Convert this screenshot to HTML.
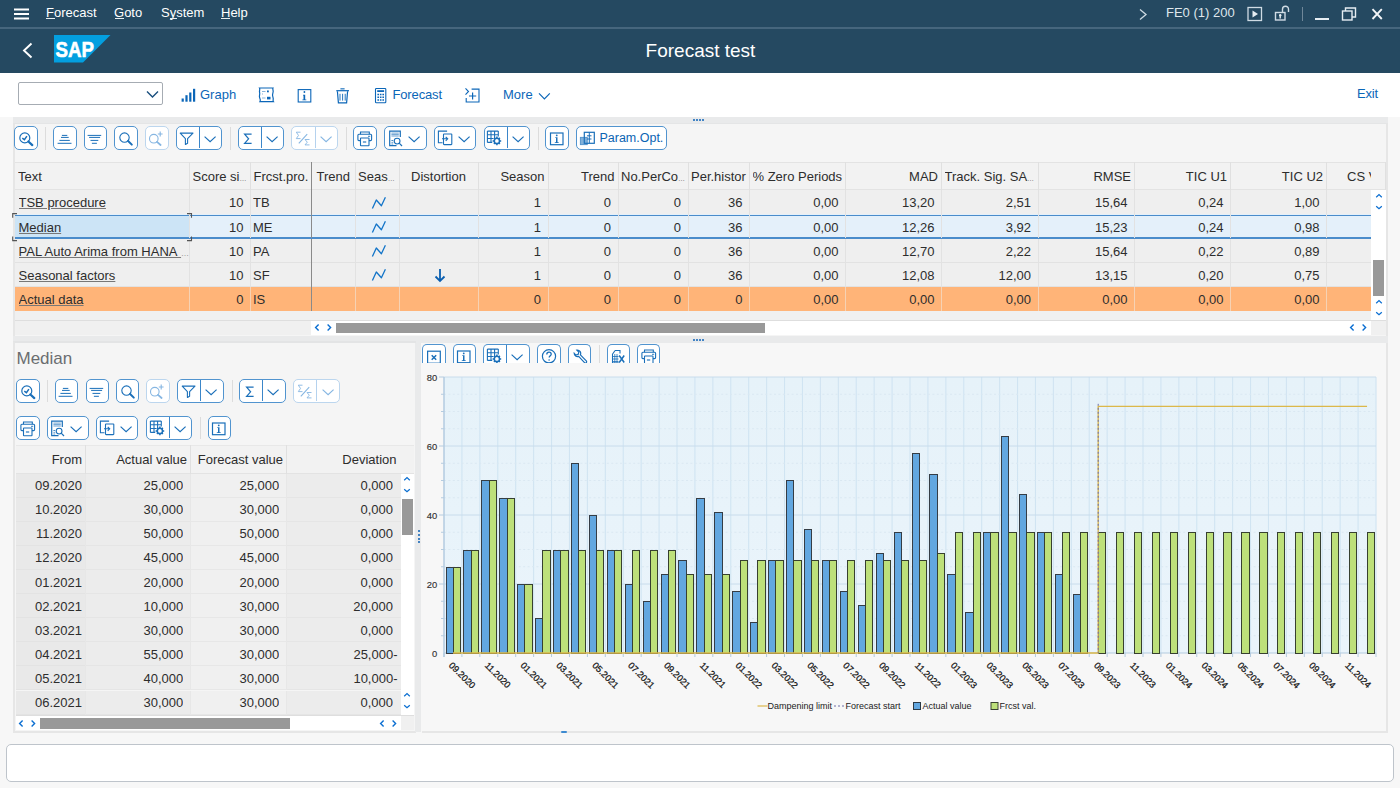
<!DOCTYPE html><html><head><meta charset="utf-8"><style>
*{box-sizing:border-box;margin:0;padding:0}
html,body{width:1400px;height:788px;overflow:hidden;background:#f7f7f7;font-family:"Liberation Sans",sans-serif;color:#333}
.a{position:absolute}
svg.a{overflow:visible}
.mn{top:4px;color:#fff;font-size:13px;line-height:18px}
.mn u{text-decoration:none}
.tbt{color:#0b66b8;font-size:13px;line-height:16px}
.dot{width:2.2px;height:2.2px;border-radius:1.1px;background:#0b62b8}
.btn{border:1.5px solid #5194cf;border-radius:5px;height:24px;background:#fff}
.btn.d{border-color:#bcd6ee}
.sep{width:1px;background:#dcdcdc}
.c{position:absolute;font-size:13px;line-height:24px;white-space:nowrap;overflow:hidden;color:#2d2d2d}
.r{text-align:right}
.hd{color:#333}
.lk{text-decoration:underline;text-decoration-color:#777}
</style></head><body><div class="a" style="left:0;top:0;width:1400px;height:73px;background:#254961"></div>
<div class="a" style="left:0;top:27px;width:1400px;height:2px;background:#46667d"></div>
<svg class="a" style="left:13px;top:7px" width="17" height="14"><rect x="1" y="1.5" width="15" height="2" fill="#fff"/><rect x="1" y="6" width="15" height="2" fill="#fff"/><rect x="1" y="10.5" width="15" height="2" fill="#fff"/></svg>
<div class="a mn" style="left:46px"><u>F</u>orecast</div>
<div class="a mn" style="left:114px"><u>G</u>oto</div>
<div class="a mn" style="left:161px">S<u>y</u>stem</div>
<div class="a mn" style="left:221px"><u>H</u>elp</div>
<div class="a" style="left:46px;top:18.2px;width:8.5px;height:1.1px;background:#e8eef2"></div>
<div class="a" style="left:114.5px;top:18.2px;width:9.5px;height:1.1px;background:#e8eef2"></div>
<div class="a" style="left:170px;top:18.2px;width:6.5px;height:1.1px;background:#e8eef2"></div>
<div class="a" style="left:221.3px;top:18.2px;width:9px;height:1.1px;background:#e8eef2"></div>
<svg class="a" style="left:1136px;top:6px" width="14" height="16"><path d="M4 3.5l6 5-6 5" fill="none" stroke="#cfdbe4" stroke-width="1.3"/></svg>
<div class="a" style="left:1166px;top:4px;color:#dfe7ec;font-size:13px;line-height:18px">FE0 (1) 200</div>
<svg class="a" style="left:1246px;top:6px" width="18" height="16"><rect x="2" y="1.5" width="13.5" height="13" fill="none" stroke="#cfdbe4" stroke-width="1.3"/><path d="M6.5 4.5v7l5.5-3.5z" fill="#e6edf2"/></svg>
<svg class="a" style="left:1273px;top:4px" width="20" height="18"><rect x="2.5" y="8.5" width="9.5" height="7.5" fill="none" stroke="#cfdbe4" stroke-width="1.4"/><path d="M9.5 8.5V5.2a3 3 0 0 1 6 0V8" fill="none" stroke="#cfdbe4" stroke-width="1.4"/><circle cx="7.2" cy="11.2" r="1.2" fill="#e6edf2"/><rect x="6.5" y="11.5" width="1.4" height="3" fill="#e6edf2"/></svg>
<div class="a" style="left:1302px;top:7px;width:1px;height:14px;background:#6f8799"></div>
<div class="a" style="left:1315px;top:18px;width:14px;height:2px;background:#e6edf2"></div>
<svg class="a" style="left:1340px;top:5px" width="18" height="18"><rect x="2.5" y="6" width="9.5" height="9" fill="none" stroke="#e6edf2" stroke-width="1.4"/><path d="M5.5 6V3h10v9h-3.5" fill="none" stroke="#e6edf2" stroke-width="1.4"/></svg>
<svg class="a" style="left:1370px;top:7px" width="14" height="14"><path d="M2.5 2.2l9.3 9.8M11.8 2.2L2.5 12" stroke="#f2f5f8" stroke-width="1.9"/></svg>
<svg class="a" style="left:20px;top:41px" width="14" height="20"><path d="M11.5 2.5L4 9.5l7.5 7" fill="none" stroke="#fff" stroke-width="1.9"/></svg>
<svg class="a" style="left:54px;top:35px" width="57" height="28" viewBox="0 0 57 28"><path d="M0 0H56.5L29 27.5H0z" fill="#039fe0"/><text x="1.5" y="21.6" font-family="Liberation Sans" font-weight="bold" font-size="22.6" fill="#fff" textLength="38.5" lengthAdjust="spacingAndGlyphs" stroke="#fff" stroke-width="0.6">SAP</text></svg>
<div class="a" style="left:0.5px;top:38.8px;width:1400px;text-align:center;color:#fff;font-size:19px;line-height:24px">Forecast test</div>
<div class="a" style="left:0;top:73px;width:1400px;height:44px;background:#fff"></div>
<div class="a" style="left:17.5px;top:82px;width:145px;height:22.5px;border:1px solid #a6acb3;border-radius:2px;background:#fff"></div>
<svg class="a" style="left:143px;top:86px" width="18" height="16"><path d="M4 5.5l5.5 5.5 5.5-5.5" fill="none" stroke="#1a4f7e" stroke-width="1.4"/></svg>
<svg class="a" style="left:181px;top:88px" width="16" height="16"><rect x="0.6" y="10.5" width="2.2" height="3.2" fill="#0b66b8"/><rect x="4.4" y="7.2" width="2.2" height="6.5" fill="#0b66b8"/><rect x="8.2" y="4.5" width="2.2" height="9.2" fill="#0b66b8"/><rect x="12" y="0.8" width="2.2" height="12.9" fill="#0b66b8"/></svg>
<div class="a tbt" style="left:200px;top:86.8px">Graph</div>
<svg class="a" style="left:258px;top:87px" width="18" height="18"><path d="M1.5 1h13.5c-0.8 1.5 0.8 2.5 0 4.5s-0.8 3 0 5-0.5 3 0.4 4.2H2c0.8-1.2 0.3-2.6-0.4-4.2s0.6-3 0-5 0.8-3-0.1-4.5z" fill="none" stroke="#0b66b8" stroke-width="1.2"/><rect x="9" y="3.5" width="1.8" height="1.8" fill="#0b66b8"/><rect x="9" y="9.8" width="3.5" height="2.6" fill="#0b66b8"/><path d="M4 4.5h3.5M4 7h1M4 11h3.5" stroke="#0b66b8" stroke-width="0.7" opacity="0.7"/></svg>
<svg class="a" style="left:297px;top:88px" width="16" height="16"><rect x="1.2" y="1.6" width="12.6" height="12.4" fill="none" stroke="#0b66b8" stroke-width="1.1"/><circle cx="7.4" cy="4" r="0.9" fill="#0b66b8"/><path d="M6 6.8h2.2v4.6h1.1v0.8H5.4v-0.8h1.1v-3.8h-0.5z" fill="#0b66b8"/></svg>
<svg class="a" style="left:335px;top:87px" width="16" height="17"><path d="M1.3 3.7h12.7" stroke="#0b66b8" stroke-width="1.2"/><path d="M5.4 2.4h4.2v-1.1h-4.2z" fill="#0b66b8"/><path d="M2.4 4.3l1 11.5h8.2l1-11.5" fill="none" stroke="#0b66b8" stroke-width="1.2"/><path d="M5 6.8v6.8M7.6 6.8v6.8M10.2 6.8v6.8" stroke="#0b66b8" stroke-width="0.9"/></svg>
<svg class="a" style="left:374px;top:87px" width="14" height="17"><rect x="1.5" y="1.5" width="10.3" height="14.3" rx="0.8" fill="none" stroke="#0b66b8" stroke-width="1.1"/><rect x="3.2" y="3.2" width="6.9" height="1.8" fill="#0b66b8"/><path d="M3.4 7.5h1.6M5.9 7.5h1.6M8.4 7.5h1.6M3.4 10.3h1.6M5.9 10.3h1.6M8.4 10.3h1.6M3.4 13h1.6M5.9 13h1.6M8.4 13h1.6" stroke="#0b66b8" stroke-width="1.5"/></svg>
<div class="a tbt" style="left:392.5px;top:86.8px;letter-spacing:-0.15px">Forecast</div>
<svg class="a" style="left:464px;top:87px" width="18" height="18"><path d="M1.5 1.4l3 3.1-3 3.1" fill="none" stroke="#0b66b8" stroke-width="1.1"/><path d="M7.6 2.1h7.4v12.9H2.2v-4" fill="none" stroke="#0b66b8" stroke-width="1.1"/><path d="M8.6 5.4v7.2M5 9h7.2" stroke="#0b66b8" stroke-width="1.2"/></svg>
<div class="a tbt" style="left:503px;top:86.8px">More</div>
<svg class="a" style="left:537px;top:90px" width="14" height="12"><path d="M2 3.4l5.4 5.4 5.4-5.4" fill="none" stroke="#0b66b8" stroke-width="1.2"/></svg>
<div class="a tbt" style="left:1357px;top:86.3px;letter-spacing:-0.2px">Exit</div>
<div class="a" style="left:12.5px;top:116.8px;width:1375px;height:6.5px;background:#e9eaeb"></div>
<div class="a dot" style="left:693px;top:119px"></div>
<div class="a dot" style="left:696px;top:119px"></div>
<div class="a dot" style="left:699px;top:119px"></div>
<div class="a dot" style="left:702px;top:119px"></div>
<div class="a" style="left:12.5px;top:123px;width:1375px;height:213.5px;background:#f5f5f5;border-top:1px solid #e4e5e6;border-left:2px solid #e6e6e6;border-right:2px solid #e6e6e6;border-bottom:1.7px solid #e3e3e3"></div>
<div class="a btn" style="left:14.1px;top:126px;width:23.8px;height:24px"><svg class="a" style="left:-1.5px;top:-1.5px" width="24" height="24" viewBox="0 0 24 24"><circle cx="10.8" cy="11.9" r="5" fill="none" stroke="#1a6fb9" stroke-width="1.2"/><line x1="14.4" y1="15.5" x2="18.3" y2="19.1" stroke="#1a6fb9" stroke-width="2.2" stroke-linecap="round"/><path d="M8.3 12.2 L10.4 13.6 L12.9 10.1" fill="none" stroke="#1a6fb9" stroke-width="1.5"/></svg></div>
<div class="a sep" style="left:45px;top:126.5px;height:23px"></div>
<div class="a btn" style="left:53.1px;top:126px;width:23.5px;height:24px"><svg class="a" style="left:-1.5px;top:-1.5px" width="24" height="24" viewBox="0 0 24 24"><path d="M8.9 9.4h5.4M8 11.4h7.7M6.4 14.4h10.4M4.6 17.3h13.9" stroke="#1a6fb9" stroke-width="1"/></svg></div>
<div class="a btn" style="left:83.8px;top:126px;width:23.6px;height:24px"><svg class="a" style="left:-1.5px;top:-1.5px" width="24" height="24" viewBox="0 0 24 24"><path d="M4.6 9.4h13.6M6.1 11.4h11M7.5 14.4h7.8M8.9 17.3h5" stroke="#1a6fb9" stroke-width="1"/></svg></div>
<div class="a btn" style="left:114.1px;top:126px;width:23.8px;height:24px"><svg class="a" style="left:-1.5px;top:-1.5px" width="24" height="24" viewBox="0 0 24 24"><circle cx="10.5" cy="11.6" r="4.7" fill="none" stroke="#1a6fb9" stroke-width="1.1"/><line x1="14.1" y1="15" x2="17.8" y2="18.6" stroke="#1a6fb9" stroke-width="2" stroke-linecap="round"/></svg></div>
<div class="a btn d" style="left:145.2px;top:126px;width:23.4px;height:24px"><svg class="a" style="left:-1.5px;top:-1.5px" width="24" height="24" viewBox="0 0 24 24"><circle cx="8.8" cy="12.7" r="4.3" fill="none" stroke="#86b6e2" stroke-width="1.1"/><line x1="12" y1="15.9" x2="15.6" y2="19" stroke="#86b6e2" stroke-width="1.8" stroke-linecap="round"/><path d="M15.2 5.6v4.8M12.8 8h4.8" stroke="#86b6e2" stroke-width="1.1"/></svg></div>
<div class="a btn" style="left:175.6px;top:126px;width:46.7px;height:24px"><svg class="a" style="left:-1.5px;top:-1.5px" width="24" height="24" viewBox="0 0 24 24"><path d="M5.2 7.1h12.8l-5.4 5.6v4.5l-2.2 1.3v-5.8z" fill="none" stroke="#1a6fb9" stroke-width="1.1" stroke-linejoin="round"/></svg><svg class="a" style="left:21.0px;top:-1.5px" width="24" height="24" viewBox="0 0 24 24"><path d="M6.6 10.6l5.5 5 5.5-5" fill="none" stroke="#1a6fb9" stroke-width="1.2"/></svg><div class="a" style="left:22.3px;top:0;width:1.2px;height:21px;background:#3b86c9"></div></div>
<div class="a sep" style="left:230px;top:126.5px;height:23px"></div>
<div class="a btn" style="left:237.7px;top:126px;width:46.4px;height:24px"><svg class="a" style="left:-1.5px;top:-1.5px" width="24" height="24" viewBox="0 0 24 24"><path d="M14.6 8.2H7.6l4 4.6-4 4.6h7" fill="none" stroke="#1a6fb9" stroke-width="1.2"/></svg><svg class="a" style="left:21.0px;top:-1.5px" width="24" height="24" viewBox="0 0 24 24"><path d="M6.6 10.6l5.5 5 5.5-5" fill="none" stroke="#1a6fb9" stroke-width="1.2"/></svg><div class="a" style="left:22.3px;top:0;width:1.2px;height:21px;background:#3b86c9"></div></div>
<div class="a btn d" style="left:291.4px;top:126px;width:46.7px;height:24px"><svg class="a" style="left:-1.5px;top:-1.5px" width="24" height="24" viewBox="0 0 24 24"><path d="M9.5 6.2H5.3l2.2 3.2-2.2 3.2h4.2" fill="none" stroke="#86b6e2" stroke-width="0.9"/><path d="M16.2 8.2L7.8 17.4" stroke="#86b6e2" stroke-width="1.1"/><path d="M18.5 13.5h-4.5l2.3 2.7-2.3 2.7h4.5" fill="none" stroke="#86b6e2" stroke-width="0.9"/></svg><svg class="a" style="left:21.5px;top:-1.5px" width="24" height="24" viewBox="0 0 24 24"><path d="M6.6 10.6l5.5 5 5.5-5" fill="none" stroke="#86b6e2" stroke-width="1.2"/></svg><div class="a" style="left:22.5px;top:0;width:1.2px;height:21px;background:#b5d2ee"></div></div>
<div class="a sep" style="left:345.5px;top:126.5px;height:23px"></div>
<div class="a btn" style="left:353.4px;top:126px;width:23.5px;height:24px"><svg class="a" style="left:-1.5px;top:-1.5px" width="24" height="24" viewBox="0 0 24 24"><path d="M7.5 8.3V6h8.8v2.3" fill="none" stroke="#1a6fb9" stroke-width="1.1"/><rect x="4.9" y="8.3" width="13.7" height="6.3" rx="1" fill="none" stroke="#1a6fb9" stroke-width="1.1"/><rect x="7.5" y="12" width="8.5" height="7.7" rx="0.5" fill="#fff" stroke="#1a6fb9" stroke-width="1.1"/><path d="M9.9 16h3.3" stroke="#1a6fb9" stroke-width="1.6" opacity="0.7"/><path d="M15 10.3h2.2" stroke="#1a6fb9" stroke-width="0.9"/></svg></div>
<div class="a btn" style="left:384.3px;top:126px;width:42.3px;height:24px"><svg class="a" style="left:-1.5px;top:-1.5px" width="24" height="24" viewBox="0 0 24 24"><path d="M12.5 19.7H5.7V5.1h10.6v6" fill="none" stroke="#1a6fb9" stroke-width="1.2"/><path d="M7.4 7.1h7.4M7.4 8.6h7.4M7.4 10h7.4" stroke="#1a6fb9" stroke-width="0.8" opacity="0.8"/><path d="M7.4 14.6h1.8M7.4 16.9h1.8M7.4 19.1h1.8" stroke="#1a6fb9" stroke-width="0.9"/><circle cx="13.1" cy="15.1" r="2.9" fill="#fff" stroke="#1a6fb9" stroke-width="1.1"/><line x1="15.2" y1="17.2" x2="18" y2="20" stroke="#1a6fb9" stroke-width="1.2"/></svg><svg class="a" style="left:16.7px;top:-1.5px" width="24" height="24" viewBox="0 0 24 24"><path d="M6.6 10.6l5.5 5 5.5-5" fill="none" stroke="#1a6fb9" stroke-width="1.2"/></svg></div>
<div class="a btn" style="left:434px;top:126px;width:41.9px;height:24px"><svg class="a" style="left:-1.5px;top:-1.5px" width="24" height="24" viewBox="0 0 24 24"><path d="M8.5 16.7H4.4V5.1h8.7" fill="none" stroke="#1a6fb9" stroke-width="1.1"/><rect x="9.5" y="8" width="8.3" height="10.6" rx="0.6" fill="#fff" stroke="#1a6fb9" stroke-width="1.1"/><path d="M8 12.8h5.5M11.7 10.8l2 2-2 2" fill="none" stroke="#1a6fb9" stroke-width="1.1"/></svg><svg class="a" style="left:16.7px;top:-1.5px" width="24" height="24" viewBox="0 0 24 24"><path d="M6.6 10.6l5.5 5 5.5-5" fill="none" stroke="#1a6fb9" stroke-width="1.2"/></svg></div>
<div class="a btn" style="left:483.5px;top:126px;width:46.3px;height:24px"><svg class="a" style="left:-1.5px;top:-1.5px" width="24" height="24" viewBox="0 0 24 24"><path d="M4.4 5.1h10.9M4.4 8.8h10.9M4.4 12.5h6M4.4 16.4h4.8M4.4 5.1v11.3M8 5.1v11.3M11.6 5.1v7.4M15.3 5.1v5.5" fill="none" stroke="#1a6fb9" stroke-width="1.1"/><circle cx="13.9" cy="14.9" r="2.6" fill="#fff" stroke="#1a6fb9" stroke-width="1.5"/><path d="M13.9 10.6v1.6M13.9 17.6v1.6M9.6 14.9h1.6M16.6 14.9h1.6M10.9 11.9l1.1 1.1M15.8 16.8l1.1 1.1M10.9 17.9l1.1-1.1M15.8 13l1.1-1.1" stroke="#1a6fb9" stroke-width="1.5"/></svg><svg class="a" style="left:21.1px;top:-1.5px" width="24" height="24" viewBox="0 0 24 24"><path d="M6.6 10.6l5.5 5 5.5-5" fill="none" stroke="#1a6fb9" stroke-width="1.2"/></svg><div class="a" style="left:22.2px;top:0;width:1.2px;height:21px;background:#3b86c9"></div></div>
<div class="a sep" style="left:537.5px;top:126.5px;height:23px"></div>
<div class="a btn" style="left:545.25px;top:126px;width:23.5px;height:24px"><svg class="a" style="left:-1.5px;top:-1.5px" width="24" height="24" viewBox="0 0 24 24"><rect x="5.5" y="7" width="12.5" height="11.7" fill="none" stroke="#1a6fb9" stroke-width="1.2"/><circle cx="11.75" cy="9.4" r="0.9" fill="#1a6fb9"/><path d="M10.3 11.2h2.2v5h1.2v0.9h-3.9v-0.9h1.2v-4.1h-0.7z" fill="#1a6fb9"/></svg></div>
<div class="a btn" style="left:576.25px;top:126px;width:90.75px;height:24px"><svg class="a" style="left:-1.5px;top:-1.5px" width="24" height="24" viewBox="0 0 24 24"><rect x="4.3" y="11.3" width="7" height="7.4" fill="#1a6fb9" opacity="0.55"/><rect x="8.3" y="6.3" width="10" height="11" fill="none" stroke="#1a6fb9" stroke-width="1.2"/><path d="M13.3 6.3v11M11 9.8h4.5M11 13h4.5" stroke="#1a6fb9" stroke-width="1"/><rect x="4.3" y="11.3" width="7" height="7.4" fill="none" stroke="#1a6fb9" stroke-width="0.8" opacity="0.7"/></svg><div class="a" style="left:22.2px;top:2.5px;font-size:12.5px;line-height:16px;color:#0b64b3">Param.Opt.</div></div>
<div class="a" style="left:15px;top:162px;width:1371px;height:28.30000000000001px;background:#f2f2f2;border-top:1px solid #e3e3e3;border-bottom:1px solid #e3e3e3"></div>
<div class="c" style="top:165px;left:18px;width:171.0px;line-height:24px;text-overflow:clip">Text</div>
<div class="c" style="top:165px;left:192.5px;width:57.5px;line-height:24px;text-overflow:clip">Score si<span style="font-size:7px;color:#555">…</span></div>
<div class="a" style="left:189.0px;top:162px;width:1px;height:28.30000000000001px;background:#e0e0e0"></div>
<div class="c" style="top:165px;left:253.5px;width:57.5px;line-height:24px;text-overflow:clip">Frcst.pro.</div>
<div class="a" style="left:250.0px;top:162px;width:1px;height:28.30000000000001px;background:#e0e0e0"></div>
<div class="c" style="top:165px;left:311.5px;width:43.5px;text-align:center;line-height:24px;text-overflow:clip">Trend</div>
<div class="a" style="left:311.0px;top:162px;width:1px;height:28.30000000000001px;background:#8a8a8a"></div>
<div class="c" style="top:165px;left:358px;width:40.5px;line-height:24px;text-overflow:clip">Seas<span style="font-size:7px;color:#555">…</span></div>
<div class="a" style="left:354.5px;top:162px;width:1px;height:28.30000000000001px;background:#e0e0e0"></div>
<div class="c" style="top:165px;left:399px;width:79px;text-align:center;line-height:24px;text-overflow:clip">Distortion</div>
<div class="a" style="left:398.5px;top:162px;width:1px;height:28.30000000000001px;background:#e0e0e0"></div>
<div class="c" style="top:165px;left:478px;width:66.5px;text-align:right;line-height:24px;text-overflow:clip">Season</div>
<div class="a" style="left:477.5px;top:162px;width:1px;height:28.30000000000001px;background:#e0e0e0"></div>
<div class="c" style="top:165px;left:548px;width:66.5px;text-align:right;line-height:24px;text-overflow:clip">Trend</div>
<div class="a" style="left:547.5px;top:162px;width:1px;height:28.30000000000001px;background:#e0e0e0"></div>
<div class="c" style="top:165px;left:621px;width:66.5px;line-height:24px;text-overflow:clip">No.PerCo<span style="font-size:7px;color:#555">…</span></div>
<div class="a" style="left:617.5px;top:162px;width:1px;height:28.30000000000001px;background:#e0e0e0"></div>
<div class="c" style="top:165px;left:691px;width:58.0px;line-height:24px;text-overflow:clip">Per.histor</div>
<div class="a" style="left:687.5px;top:162px;width:1px;height:28.30000000000001px;background:#e0e0e0"></div>
<div class="c" style="top:165px;left:752.5px;width:92.5px;line-height:24px;text-overflow:clip">% Zero Periods</div>
<div class="a" style="left:749.0px;top:162px;width:1px;height:28.30000000000001px;background:#e0e0e0"></div>
<div class="c" style="top:165px;left:845.5px;width:92.5px;text-align:right;line-height:24px;text-overflow:clip">MAD</div>
<div class="a" style="left:845.0px;top:162px;width:1px;height:28.30000000000001px;background:#e0e0e0"></div>
<div class="c" style="top:165px;left:944.5px;width:93.0px;line-height:24px;text-overflow:clip">Track. Sig. SA<span style="font-size:7px;color:#555">…</span></div>
<div class="a" style="left:941.0px;top:162px;width:1px;height:28.30000000000001px;background:#e0e0e0"></div>
<div class="c" style="top:165px;left:1038px;width:93.0px;text-align:right;line-height:24px;text-overflow:clip">RMSE</div>
<div class="a" style="left:1037.5px;top:162px;width:1px;height:28.30000000000001px;background:#e0e0e0"></div>
<div class="c" style="top:165px;left:1134.5px;width:92.5px;text-align:right;line-height:24px;text-overflow:clip">TIC U1</div>
<div class="a" style="left:1134.0px;top:162px;width:1px;height:28.30000000000001px;background:#e0e0e0"></div>
<div class="c" style="top:165px;left:1230.5px;width:92.5px;text-align:right;line-height:24px;text-overflow:clip">TIC U2</div>
<div class="a" style="left:1230.0px;top:162px;width:1px;height:28.30000000000001px;background:#e0e0e0"></div>
<div class="c" style="top:165px;left:1347.0px;width:24.0px;line-height:24px;text-overflow:clip">CS V</div>
<div class="a" style="left:1326.0px;top:162px;width:1px;height:28.30000000000001px;background:#e0e0e0"></div>
<div class="a" style="left:1385px;top:162px;width:1px;height:28.30000000000001px;background:#e0e0e0"></div>
<div class="a" style="left:15px;top:190.3px;width:1356px;height:24.400000000000002px;background:#efefef;border-bottom:1px solid #e2e2e2"></div>
<div class="a" style="left:189.0px;top:190.3px;width:1px;height:24.1px;background:#e2e2e2"></div>
<div class="a" style="left:250.0px;top:190.3px;width:1px;height:24.1px;background:#e2e2e2"></div>
<div class="a" style="left:311.0px;top:190.3px;width:1px;height:24.1px;background:#8a8a8a"></div>
<div class="a" style="left:354.5px;top:190.3px;width:1px;height:24.1px;background:#e2e2e2"></div>
<div class="a" style="left:398.5px;top:190.3px;width:1px;height:24.1px;background:#e2e2e2"></div>
<div class="a" style="left:477.5px;top:190.3px;width:1px;height:24.1px;background:#e2e2e2"></div>
<div class="a" style="left:547.5px;top:190.3px;width:1px;height:24.1px;background:#e2e2e2"></div>
<div class="a" style="left:617.5px;top:190.3px;width:1px;height:24.1px;background:#e2e2e2"></div>
<div class="a" style="left:687.5px;top:190.3px;width:1px;height:24.1px;background:#e2e2e2"></div>
<div class="a" style="left:749.0px;top:190.3px;width:1px;height:24.1px;background:#e2e2e2"></div>
<div class="a" style="left:845.0px;top:190.3px;width:1px;height:24.1px;background:#e2e2e2"></div>
<div class="a" style="left:941.0px;top:190.3px;width:1px;height:24.1px;background:#e2e2e2"></div>
<div class="a" style="left:1037.5px;top:190.3px;width:1px;height:24.1px;background:#e2e2e2"></div>
<div class="a" style="left:1134.0px;top:190.3px;width:1px;height:24.1px;background:#e2e2e2"></div>
<div class="a" style="left:1230.0px;top:190.3px;width:1px;height:24.1px;background:#e2e2e2"></div>
<div class="a" style="left:1326.0px;top:190.3px;width:1px;height:24.1px;background:#e2e2e2"></div>
<div class="c" style="top:191.4px;left:18.5px;width:172px"><span class="lk">TSB procedure</span></div>
<div class="c r" style="top:191.4px;left:189.5px;width:54.0px">10</div>
<div class="c" style="top:191.4px;left:253.0px;width:58.0px">TB</div>
<svg class="a" style="left:370px;top:194.8px" width="16" height="16"><path d="M2.4 13.5L6.3 5l5.1 5.8 4-8.5" fill="none" stroke="#1274c8" stroke-width="1.3" stroke-linejoin="round"/></svg>
<div class="c r" style="top:191.4px;left:478px;width:63px">1</div>
<div class="c r" style="top:191.4px;left:548px;width:63px">0</div>
<div class="c r" style="top:191.4px;left:618px;width:63px">0</div>
<div class="c r" style="top:191.4px;left:688px;width:54.5px">36</div>
<div class="c r" style="top:191.4px;left:749.5px;width:89.0px">0,00</div>
<div class="c r" style="top:191.4px;left:845.5px;width:89.0px">13,20</div>
<div class="c r" style="top:191.4px;left:941.5px;width:89.5px">2,51</div>
<div class="c r" style="top:191.4px;left:1038px;width:89.5px">15,64</div>
<div class="c r" style="top:191.4px;left:1134.5px;width:89.0px">0,24</div>
<div class="c r" style="top:191.4px;left:1230.5px;width:89.0px">1,00</div>
<div class="a" style="left:15px;top:214.4px;width:1356px;height:24.400000000000002px;background:#e4f0fa;border-bottom:1px solid #e2e2e2"></div>
<div class="a" style="left:15px;top:214.6px;width:174.5px;height:24.1px;background:#cce4f6"></div>
<div class="a" style="left:15px;top:214.8px;width:1356px;height:1.2px;background:#4a8ccb"></div>
<div class="a" style="left:15px;top:237.4px;width:1356px;height:1.2px;background:#4a8ccb"></div>
<div class="a" style="left:189.0px;top:214.4px;width:1px;height:24.1px;background:#e2e2e2"></div>
<div class="a" style="left:250.0px;top:214.4px;width:1px;height:24.1px;background:#e2e2e2"></div>
<div class="a" style="left:311.0px;top:214.4px;width:1px;height:24.1px;background:#8a8a8a"></div>
<div class="a" style="left:354.5px;top:214.4px;width:1px;height:24.1px;background:#e2e2e2"></div>
<div class="a" style="left:398.5px;top:214.4px;width:1px;height:24.1px;background:#e2e2e2"></div>
<div class="a" style="left:477.5px;top:214.4px;width:1px;height:24.1px;background:#e2e2e2"></div>
<div class="a" style="left:547.5px;top:214.4px;width:1px;height:24.1px;background:#e2e2e2"></div>
<div class="a" style="left:617.5px;top:214.4px;width:1px;height:24.1px;background:#e2e2e2"></div>
<div class="a" style="left:687.5px;top:214.4px;width:1px;height:24.1px;background:#e2e2e2"></div>
<div class="a" style="left:749.0px;top:214.4px;width:1px;height:24.1px;background:#e2e2e2"></div>
<div class="a" style="left:845.0px;top:214.4px;width:1px;height:24.1px;background:#e2e2e2"></div>
<div class="a" style="left:941.0px;top:214.4px;width:1px;height:24.1px;background:#e2e2e2"></div>
<div class="a" style="left:1037.5px;top:214.4px;width:1px;height:24.1px;background:#e2e2e2"></div>
<div class="a" style="left:1134.0px;top:214.4px;width:1px;height:24.1px;background:#e2e2e2"></div>
<div class="a" style="left:1230.0px;top:214.4px;width:1px;height:24.1px;background:#e2e2e2"></div>
<div class="a" style="left:1326.0px;top:214.4px;width:1px;height:24.1px;background:#e2e2e2"></div>
<div class="c" style="top:215.5px;left:18.5px;width:172px"><span class="lk">Median</span></div>
<div class="c r" style="top:215.5px;left:189.5px;width:54.0px">10</div>
<div class="c" style="top:215.5px;left:253.0px;width:58.0px">ME</div>
<svg class="a" style="left:370px;top:218.9px" width="16" height="16"><path d="M2.4 13.5L6.3 5l5.1 5.8 4-8.5" fill="none" stroke="#1274c8" stroke-width="1.3" stroke-linejoin="round"/></svg>
<div class="c r" style="top:215.5px;left:478px;width:63px">1</div>
<div class="c r" style="top:215.5px;left:548px;width:63px">0</div>
<div class="c r" style="top:215.5px;left:618px;width:63px">0</div>
<div class="c r" style="top:215.5px;left:688px;width:54.5px">36</div>
<div class="c r" style="top:215.5px;left:749.5px;width:89.0px">0,00</div>
<div class="c r" style="top:215.5px;left:845.5px;width:89.0px">12,26</div>
<div class="c r" style="top:215.5px;left:941.5px;width:89.5px">3,92</div>
<div class="c r" style="top:215.5px;left:1038px;width:89.5px">15,23</div>
<div class="c r" style="top:215.5px;left:1134.5px;width:89.0px">0,24</div>
<div class="c r" style="top:215.5px;left:1230.5px;width:89.0px">0,98</div>
<div class="a" style="left:15px;top:238.5px;width:1356px;height:24.400000000000002px;background:#efefef;border-bottom:1px solid #e2e2e2"></div>
<div class="a" style="left:189.0px;top:238.5px;width:1px;height:24.1px;background:#e2e2e2"></div>
<div class="a" style="left:250.0px;top:238.5px;width:1px;height:24.1px;background:#e2e2e2"></div>
<div class="a" style="left:311.0px;top:238.5px;width:1px;height:24.1px;background:#8a8a8a"></div>
<div class="a" style="left:354.5px;top:238.5px;width:1px;height:24.1px;background:#e2e2e2"></div>
<div class="a" style="left:398.5px;top:238.5px;width:1px;height:24.1px;background:#e2e2e2"></div>
<div class="a" style="left:477.5px;top:238.5px;width:1px;height:24.1px;background:#e2e2e2"></div>
<div class="a" style="left:547.5px;top:238.5px;width:1px;height:24.1px;background:#e2e2e2"></div>
<div class="a" style="left:617.5px;top:238.5px;width:1px;height:24.1px;background:#e2e2e2"></div>
<div class="a" style="left:687.5px;top:238.5px;width:1px;height:24.1px;background:#e2e2e2"></div>
<div class="a" style="left:749.0px;top:238.5px;width:1px;height:24.1px;background:#e2e2e2"></div>
<div class="a" style="left:845.0px;top:238.5px;width:1px;height:24.1px;background:#e2e2e2"></div>
<div class="a" style="left:941.0px;top:238.5px;width:1px;height:24.1px;background:#e2e2e2"></div>
<div class="a" style="left:1037.5px;top:238.5px;width:1px;height:24.1px;background:#e2e2e2"></div>
<div class="a" style="left:1134.0px;top:238.5px;width:1px;height:24.1px;background:#e2e2e2"></div>
<div class="a" style="left:1230.0px;top:238.5px;width:1px;height:24.1px;background:#e2e2e2"></div>
<div class="a" style="left:1326.0px;top:238.5px;width:1px;height:24.1px;background:#e2e2e2"></div>
<div class="c" style="top:239.6px;left:18.5px;width:175px"><span class="lk">PAL Auto Arima from HANA&nbsp;</span><span style="font-size:8px;color:#777">…</span></div>
<div class="c r" style="top:239.6px;left:189.5px;width:54.0px">10</div>
<div class="c" style="top:239.6px;left:253.0px;width:58.0px">PA</div>
<svg class="a" style="left:370px;top:243.0px" width="16" height="16"><path d="M2.4 13.5L6.3 5l5.1 5.8 4-8.5" fill="none" stroke="#1274c8" stroke-width="1.3" stroke-linejoin="round"/></svg>
<div class="c r" style="top:239.6px;left:478px;width:63px">1</div>
<div class="c r" style="top:239.6px;left:548px;width:63px">0</div>
<div class="c r" style="top:239.6px;left:618px;width:63px">0</div>
<div class="c r" style="top:239.6px;left:688px;width:54.5px">36</div>
<div class="c r" style="top:239.6px;left:749.5px;width:89.0px">0,00</div>
<div class="c r" style="top:239.6px;left:845.5px;width:89.0px">12,70</div>
<div class="c r" style="top:239.6px;left:941.5px;width:89.5px">2,22</div>
<div class="c r" style="top:239.6px;left:1038px;width:89.5px">15,64</div>
<div class="c r" style="top:239.6px;left:1134.5px;width:89.0px">0,22</div>
<div class="c r" style="top:239.6px;left:1230.5px;width:89.0px">0,89</div>
<div class="a" style="left:15px;top:262.6px;width:1356px;height:24.400000000000002px;background:#efefef;border-bottom:1px solid #e2e2e2"></div>
<div class="a" style="left:189.0px;top:262.6px;width:1px;height:24.1px;background:#e2e2e2"></div>
<div class="a" style="left:250.0px;top:262.6px;width:1px;height:24.1px;background:#e2e2e2"></div>
<div class="a" style="left:311.0px;top:262.6px;width:1px;height:24.1px;background:#8a8a8a"></div>
<div class="a" style="left:354.5px;top:262.6px;width:1px;height:24.1px;background:#e2e2e2"></div>
<div class="a" style="left:398.5px;top:262.6px;width:1px;height:24.1px;background:#e2e2e2"></div>
<div class="a" style="left:477.5px;top:262.6px;width:1px;height:24.1px;background:#e2e2e2"></div>
<div class="a" style="left:547.5px;top:262.6px;width:1px;height:24.1px;background:#e2e2e2"></div>
<div class="a" style="left:617.5px;top:262.6px;width:1px;height:24.1px;background:#e2e2e2"></div>
<div class="a" style="left:687.5px;top:262.6px;width:1px;height:24.1px;background:#e2e2e2"></div>
<div class="a" style="left:749.0px;top:262.6px;width:1px;height:24.1px;background:#e2e2e2"></div>
<div class="a" style="left:845.0px;top:262.6px;width:1px;height:24.1px;background:#e2e2e2"></div>
<div class="a" style="left:941.0px;top:262.6px;width:1px;height:24.1px;background:#e2e2e2"></div>
<div class="a" style="left:1037.5px;top:262.6px;width:1px;height:24.1px;background:#e2e2e2"></div>
<div class="a" style="left:1134.0px;top:262.6px;width:1px;height:24.1px;background:#e2e2e2"></div>
<div class="a" style="left:1230.0px;top:262.6px;width:1px;height:24.1px;background:#e2e2e2"></div>
<div class="a" style="left:1326.0px;top:262.6px;width:1px;height:24.1px;background:#e2e2e2"></div>
<div class="c" style="top:263.70000000000005px;left:18.5px;width:172px"><span class="lk">Seasonal factors</span></div>
<div class="c r" style="top:263.70000000000005px;left:189.5px;width:54.0px">10</div>
<div class="c" style="top:263.70000000000005px;left:253.0px;width:58.0px">SF</div>
<svg class="a" style="left:370px;top:267.1px" width="16" height="16"><path d="M2.4 13.5L6.3 5l5.1 5.8 4-8.5" fill="none" stroke="#1274c8" stroke-width="1.3" stroke-linejoin="round"/></svg>
<svg class="a" style="left:432.5px;top:266.6px" width="14" height="16"><path d="M7 2v12M2.5 9.5L7 14l4.5-4.5" fill="none" stroke="#0b5fb0" stroke-width="1.8"/></svg>
<div class="c r" style="top:263.70000000000005px;left:478px;width:63px">1</div>
<div class="c r" style="top:263.70000000000005px;left:548px;width:63px">0</div>
<div class="c r" style="top:263.70000000000005px;left:618px;width:63px">0</div>
<div class="c r" style="top:263.70000000000005px;left:688px;width:54.5px">36</div>
<div class="c r" style="top:263.70000000000005px;left:749.5px;width:89.0px">0,00</div>
<div class="c r" style="top:263.70000000000005px;left:845.5px;width:89.0px">12,08</div>
<div class="c r" style="top:263.70000000000005px;left:941.5px;width:89.5px">12,00</div>
<div class="c r" style="top:263.70000000000005px;left:1038px;width:89.5px">13,15</div>
<div class="c r" style="top:263.70000000000005px;left:1134.5px;width:89.0px">0,20</div>
<div class="c r" style="top:263.70000000000005px;left:1230.5px;width:89.0px">0,75</div>
<div class="a" style="left:15px;top:286.70000000000005px;width:1356px;height:24.400000000000002px;background:#ffb478;border-bottom:1px solid #ffb478"></div>
<div class="a" style="left:189.0px;top:286.70000000000005px;width:1px;height:24.1px;background:#f6d2b4"></div>
<div class="a" style="left:250.0px;top:286.70000000000005px;width:1px;height:24.1px;background:#f6d2b4"></div>
<div class="a" style="left:311.0px;top:286.70000000000005px;width:1px;height:24.1px;background:#8a8a8a"></div>
<div class="a" style="left:354.5px;top:286.70000000000005px;width:1px;height:24.1px;background:#f6d2b4"></div>
<div class="a" style="left:398.5px;top:286.70000000000005px;width:1px;height:24.1px;background:#f6d2b4"></div>
<div class="a" style="left:477.5px;top:286.70000000000005px;width:1px;height:24.1px;background:#f6d2b4"></div>
<div class="a" style="left:547.5px;top:286.70000000000005px;width:1px;height:24.1px;background:#f6d2b4"></div>
<div class="a" style="left:617.5px;top:286.70000000000005px;width:1px;height:24.1px;background:#f6d2b4"></div>
<div class="a" style="left:687.5px;top:286.70000000000005px;width:1px;height:24.1px;background:#f6d2b4"></div>
<div class="a" style="left:749.0px;top:286.70000000000005px;width:1px;height:24.1px;background:#f6d2b4"></div>
<div class="a" style="left:845.0px;top:286.70000000000005px;width:1px;height:24.1px;background:#f6d2b4"></div>
<div class="a" style="left:941.0px;top:286.70000000000005px;width:1px;height:24.1px;background:#f6d2b4"></div>
<div class="a" style="left:1037.5px;top:286.70000000000005px;width:1px;height:24.1px;background:#f6d2b4"></div>
<div class="a" style="left:1134.0px;top:286.70000000000005px;width:1px;height:24.1px;background:#f6d2b4"></div>
<div class="a" style="left:1230.0px;top:286.70000000000005px;width:1px;height:24.1px;background:#f6d2b4"></div>
<div class="a" style="left:1326.0px;top:286.70000000000005px;width:1px;height:24.1px;background:#f6d2b4"></div>
<div class="c" style="top:287.80000000000007px;left:18.5px;width:172px"><span class="lk">Actual data</span></div>
<div class="c r" style="top:287.80000000000007px;left:189.5px;width:54.0px">0</div>
<div class="c" style="top:287.80000000000007px;left:253.0px;width:58.0px">IS</div>
<div class="c r" style="top:287.80000000000007px;left:478px;width:63px">0</div>
<div class="c r" style="top:287.80000000000007px;left:548px;width:63px">0</div>
<div class="c r" style="top:287.80000000000007px;left:618px;width:63px">0</div>
<div class="c r" style="top:287.80000000000007px;left:688px;width:54.5px">0</div>
<div class="c r" style="top:287.80000000000007px;left:749.5px;width:89.0px">0,00</div>
<div class="c r" style="top:287.80000000000007px;left:845.5px;width:89.0px">0,00</div>
<div class="c r" style="top:287.80000000000007px;left:941.5px;width:89.5px">0,00</div>
<div class="c r" style="top:287.80000000000007px;left:1038px;width:89.5px">0,00</div>
<div class="c r" style="top:287.80000000000007px;left:1134.5px;width:89.0px">0,00</div>
<div class="c r" style="top:287.80000000000007px;left:1230.5px;width:89.0px">0,00</div>
<svg class="a" style="left:12px;top:212.8px" width="182" height="31"><path d="M0.7 4.8V0.6H5M175 0.6h4.5V4.8M0.7 23.4v4.2H5M175 27.6h4.5V23.4" fill="none" stroke="#555" stroke-width="1.1"/></svg>
<div class="a" style="left:15px;top:310.8px;width:1356px;height:9.199999999999989px;background:#f0f0f0"></div>
<div class="a" style="left:15px;top:320px;width:1371px;height:1px;background:#dedede"></div>
<div class="a" style="left:15px;top:321px;width:296px;height:14px;background:#f0f0f0"></div>
<div class="a" style="left:311px;top:321px;width:1060px;height:14px;background:#fff"></div>
<div class="a" style="left:336px;top:322.5px;width:429px;height:10px;background:#999"></div>
<div class="a" style="left:1371px;top:321px;width:15px;height:14px;background:#f0f0f0"></div>
<svg class="a" style="left:311px;top:322px" width="22" height="12"><path d="M7.6 2.6L4.6 5.6 7.6 8.6M16.6 2.6l3 3-3 3" fill="none" stroke="#0a6ed1" stroke-width="1.4"/></svg>
<svg class="a" style="left:1346px;top:322px" width="22" height="12"><path d="M7.6 2.6L4.6 5.6 7.6 8.6M16.6 2.6l3 3-3 3" fill="none" stroke="#0a6ed1" stroke-width="1.4"/></svg>
<div class="a" style="left:1371px;top:190.3px;width:14.5px;height:129.7px;background:#fff"></div>
<div class="a" style="left:1373px;top:260px;width:11px;height:36px;background:#999"></div>
<svg class="a" style="left:1372.5px;top:191px" width="12" height="22"><path d="M3.2 6.2l2.8-2.6 2.8 2.6M3.2 15.2l2.8 2.6 2.8-2.6" fill="none" stroke="#0a6ed1" stroke-width="1.2"/></svg>
<svg class="a" style="left:1372.5px;top:297px" width="12" height="22"><path d="M3.2 6.2l2.8-2.6 2.8 2.6M3.2 15.2l2.8 2.6 2.8-2.6" fill="none" stroke="#0a6ed1" stroke-width="1.2"/></svg>
<div class="a" style="left:12.5px;top:336.4px;width:1375px;height:6.6px;background:#e9eaeb"></div>
<div class="a dot" style="left:693px;top:339px"></div>
<div class="a dot" style="left:696px;top:339px"></div>
<div class="a dot" style="left:699px;top:339px"></div>
<div class="a dot" style="left:702px;top:339px"></div>
<div class="a" style="left:12.5px;top:341.2px;width:403px;height:391.5px;background:#f5f5f5;border-top:2.6px solid #e3e4e5;border-left:2px solid #e6e6e6;border-bottom:2px solid #e6e6e6"></div>
<div class="a" style="left:16.5px;top:347px;font-size:17px;line-height:24px;color:#6a6d70">Median</div>
<div class="a btn" style="left:16px;top:379px;width:23.5px;height:23.5px"><svg class="a" style="left:-1.5px;top:-1.5px" width="24" height="24" viewBox="0 0 24 24"><circle cx="10.8" cy="11.9" r="5" fill="none" stroke="#1a6fb9" stroke-width="1.2"/><line x1="14.4" y1="15.5" x2="18.3" y2="19.1" stroke="#1a6fb9" stroke-width="2.2" stroke-linecap="round"/><path d="M8.3 12.2 L10.4 13.6 L12.9 10.1" fill="none" stroke="#1a6fb9" stroke-width="1.5"/></svg></div>
<div class="a sep" style="left:47px;top:379.5px;height:22.5px"></div>
<div class="a btn" style="left:54.6px;top:379px;width:23.4px;height:23.5px"><svg class="a" style="left:-1.5px;top:-1.5px" width="24" height="24" viewBox="0 0 24 24"><path d="M8.9 9.4h5.4M8 11.4h7.7M6.4 14.4h10.4M4.6 17.3h13.9" stroke="#1a6fb9" stroke-width="1"/></svg></div>
<div class="a btn" style="left:85.5px;top:379px;width:23.4px;height:23.5px"><svg class="a" style="left:-1.5px;top:-1.5px" width="24" height="24" viewBox="0 0 24 24"><path d="M4.6 9.4h13.6M6.1 11.4h11M7.5 14.4h7.8M8.9 17.3h5" stroke="#1a6fb9" stroke-width="1"/></svg></div>
<div class="a btn" style="left:116px;top:379px;width:23.4px;height:23.5px"><svg class="a" style="left:-1.5px;top:-1.5px" width="24" height="24" viewBox="0 0 24 24"><circle cx="10.5" cy="11.6" r="4.7" fill="none" stroke="#1a6fb9" stroke-width="1.1"/><line x1="14.1" y1="15" x2="17.8" y2="18.6" stroke="#1a6fb9" stroke-width="2" stroke-linecap="round"/></svg></div>
<div class="a btn d" style="left:146.4px;top:379px;width:23.4px;height:23.5px"><svg class="a" style="left:-1.5px;top:-1.5px" width="24" height="24" viewBox="0 0 24 24"><circle cx="8.8" cy="12.7" r="4.3" fill="none" stroke="#86b6e2" stroke-width="1.1"/><line x1="12" y1="15.9" x2="15.6" y2="19" stroke="#86b6e2" stroke-width="1.8" stroke-linecap="round"/><path d="M15.2 5.6v4.8M12.8 8h4.8" stroke="#86b6e2" stroke-width="1.1"/></svg></div>
<div class="a btn" style="left:177px;top:379px;width:46.5px;height:23.5px"><svg class="a" style="left:-1.5px;top:-1.5px" width="24" height="24" viewBox="0 0 24 24"><path d="M5.2 7.1h12.8l-5.4 5.6v4.5l-2.2 1.3v-5.8z" fill="none" stroke="#1a6fb9" stroke-width="1.1" stroke-linejoin="round"/></svg><svg class="a" style="left:21.0px;top:-1.5px" width="24" height="24" viewBox="0 0 24 24"><path d="M6.6 10.6l5.5 5 5.5-5" fill="none" stroke="#1a6fb9" stroke-width="1.2"/></svg><div class="a" style="left:22.0px;top:0;width:1.2px;height:20.5px;background:#3b86c9"></div></div>
<div class="a sep" style="left:231.6px;top:379.5px;height:22.5px"></div>
<div class="a btn" style="left:239px;top:379px;width:46.6px;height:23.5px"><svg class="a" style="left:-1.5px;top:-1.5px" width="24" height="24" viewBox="0 0 24 24"><path d="M14.6 8.2H7.6l4 4.6-4 4.6h7" fill="none" stroke="#1a6fb9" stroke-width="1.2"/></svg><svg class="a" style="left:21.0px;top:-1.5px" width="24" height="24" viewBox="0 0 24 24"><path d="M6.6 10.6l5.5 5 5.5-5" fill="none" stroke="#1a6fb9" stroke-width="1.2"/></svg><div class="a" style="left:22.0px;top:0;width:1.2px;height:20.5px;background:#3b86c9"></div></div>
<div class="a btn d" style="left:293px;top:379px;width:46.6px;height:23.5px"><svg class="a" style="left:-1.5px;top:-1.5px" width="24" height="24" viewBox="0 0 24 24"><path d="M9.5 6.2H5.3l2.2 3.2-2.2 3.2h4.2" fill="none" stroke="#86b6e2" stroke-width="0.9"/><path d="M16.2 8.2L7.8 17.4" stroke="#86b6e2" stroke-width="1.1"/><path d="M18.5 13.5h-4.5l2.3 2.7-2.3 2.7h4.5" fill="none" stroke="#86b6e2" stroke-width="0.9"/></svg><svg class="a" style="left:21.5px;top:-1.5px" width="24" height="24" viewBox="0 0 24 24"><path d="M6.6 10.6l5.5 5 5.5-5" fill="none" stroke="#86b6e2" stroke-width="1.2"/></svg><div class="a" style="left:22.0px;top:0;width:1.2px;height:20.5px;background:#b5d2ee"></div></div>
<div class="a btn" style="left:16px;top:416px;width:23.5px;height:23.5px"><svg class="a" style="left:-1.5px;top:-1.5px" width="24" height="24" viewBox="0 0 24 24"><path d="M7.5 8.3V6h8.8v2.3" fill="none" stroke="#1a6fb9" stroke-width="1.1"/><rect x="4.9" y="8.3" width="13.7" height="6.3" rx="1" fill="none" stroke="#1a6fb9" stroke-width="1.1"/><rect x="7.5" y="12" width="8.5" height="7.7" rx="0.5" fill="#fff" stroke="#1a6fb9" stroke-width="1.1"/><path d="M9.9 16h3.3" stroke="#1a6fb9" stroke-width="1.6" opacity="0.7"/><path d="M15 10.3h2.2" stroke="#1a6fb9" stroke-width="0.9"/></svg></div>
<div class="a btn" style="left:46.5px;top:416px;width:42px;height:23.5px"><svg class="a" style="left:-1.5px;top:-1.5px" width="24" height="24" viewBox="0 0 24 24"><path d="M12.5 19.7H5.7V5.1h10.6v6" fill="none" stroke="#1a6fb9" stroke-width="1.2"/><path d="M7.4 7.1h7.4M7.4 8.6h7.4M7.4 10h7.4" stroke="#1a6fb9" stroke-width="0.8" opacity="0.8"/><path d="M7.4 14.6h1.8M7.4 16.9h1.8M7.4 19.1h1.8" stroke="#1a6fb9" stroke-width="0.9"/><circle cx="13.1" cy="15.1" r="2.9" fill="#fff" stroke="#1a6fb9" stroke-width="1.1"/><line x1="15.2" y1="17.2" x2="18" y2="20" stroke="#1a6fb9" stroke-width="1.2"/></svg><svg class="a" style="left:16.7px;top:-1.5px" width="24" height="24" viewBox="0 0 24 24"><path d="M6.6 10.6l5.5 5 5.5-5" fill="none" stroke="#1a6fb9" stroke-width="1.2"/></svg></div>
<div class="a btn" style="left:96px;top:416px;width:42px;height:23.5px"><svg class="a" style="left:-1.5px;top:-1.5px" width="24" height="24" viewBox="0 0 24 24"><path d="M8.5 16.7H4.4V5.1h8.7" fill="none" stroke="#1a6fb9" stroke-width="1.1"/><rect x="9.5" y="8" width="8.3" height="10.6" rx="0.6" fill="#fff" stroke="#1a6fb9" stroke-width="1.1"/><path d="M8 12.8h5.5M11.7 10.8l2 2-2 2" fill="none" stroke="#1a6fb9" stroke-width="1.1"/></svg><svg class="a" style="left:16.7px;top:-1.5px" width="24" height="24" viewBox="0 0 24 24"><path d="M6.6 10.6l5.5 5 5.5-5" fill="none" stroke="#1a6fb9" stroke-width="1.2"/></svg></div>
<div class="a btn" style="left:146px;top:416px;width:46px;height:23.5px"><svg class="a" style="left:-1.5px;top:-1.5px" width="24" height="24" viewBox="0 0 24 24"><path d="M4.4 5.1h10.9M4.4 8.8h10.9M4.4 12.5h6M4.4 16.4h4.8M4.4 5.1v11.3M8 5.1v11.3M11.6 5.1v7.4M15.3 5.1v5.5" fill="none" stroke="#1a6fb9" stroke-width="1.1"/><circle cx="13.9" cy="14.9" r="2.6" fill="#fff" stroke="#1a6fb9" stroke-width="1.5"/><path d="M13.9 10.6v1.6M13.9 17.6v1.6M9.6 14.9h1.6M16.6 14.9h1.6M10.9 11.9l1.1 1.1M15.8 16.8l1.1 1.1M10.9 17.9l1.1-1.1M15.8 13l1.1-1.1" stroke="#1a6fb9" stroke-width="1.5"/></svg><svg class="a" style="left:21.1px;top:-1.5px" width="24" height="24" viewBox="0 0 24 24"><path d="M6.6 10.6l5.5 5 5.5-5" fill="none" stroke="#1a6fb9" stroke-width="1.2"/></svg><div class="a" style="left:22.0px;top:0;width:1.2px;height:20.5px;background:#3b86c9"></div></div>
<div class="a sep" style="left:200px;top:416.5px;height:22.5px"></div>
<div class="a btn" style="left:207.6px;top:416px;width:23.4px;height:23.5px"><svg class="a" style="left:-1.5px;top:-1.5px" width="24" height="24" viewBox="0 0 24 24"><rect x="5.5" y="7" width="12.5" height="11.7" fill="none" stroke="#1a6fb9" stroke-width="1.2"/><circle cx="11.75" cy="9.4" r="0.9" fill="#1a6fb9"/><path d="M10.3 11.2h2.2v5h1.2v0.9h-3.9v-0.9h1.2v-4.1h-0.7z" fill="#1a6fb9"/></svg></div>
<div class="a" style="left:16px;top:445.2px;width:398px;height:28.400000000000034px;background:#f2f2f2;border-top:1px solid #e8e8e8;border-bottom:1px solid #e3e3e3"></div>
<div class="c r" style="top:447.5px;left:16px;width:66.0px">From</div>
<div class="c r" style="top:447.5px;left:85.5px;width:101.5px">Actual value</div>
<div class="a" style="left:85.0px;top:445.2px;width:1px;height:28.400000000000034px;background:#e0e0e0"></div>
<div class="c r" style="top:447.5px;left:190.5px;width:92.5px">Forecast value</div>
<div class="a" style="left:190.0px;top:445.2px;width:1px;height:28.400000000000034px;background:#e0e0e0"></div>
<div class="c r" style="top:447.5px;left:286.5px;width:110.0px">Deviation</div>
<div class="a" style="left:286.0px;top:445.2px;width:1px;height:28.400000000000034px;background:#e0e0e0"></div>
<div class="a" style="left:16px;top:473.6px;width:385px;height:24.1px;background:#ececec;border-bottom:1px solid #e5e5e5"></div>
<div class="a" style="left:16px;top:473.6px;width:69.5px;height:24.1px;background:#e9e9e9;border-bottom:1px solid #e3e3e3"></div>
<div class="a" style="left:190.5px;top:473.6px;width:96px;height:24.1px;background:#f0f0f0;border-bottom:1px solid #e7e7e7"></div>
<div class="a" style="left:85.0px;top:473.6px;width:1px;height:24.1px;background:#e7e7e7"></div>
<div class="a" style="left:190.0px;top:473.6px;width:1px;height:24.1px;background:#e7e7e7"></div>
<div class="a" style="left:286.0px;top:473.6px;width:1px;height:24.1px;background:#e7e7e7"></div>
<div class="c r" style="top:474.1px;left:16px;width:66.0px">09.2020</div>
<div class="c r" style="top:474.1px;left:85.5px;width:97.7px">25,000</div>
<div class="c r" style="top:474.1px;left:190.5px;width:88.7px">25,000</div>
<div class="c r" style="top:474.1px;left:286.5px;width:106.5px">0,000</div>
<div class="a" style="left:16px;top:497.70000000000005px;width:385px;height:24.1px;background:#ececec;border-bottom:1px solid #e5e5e5"></div>
<div class="a" style="left:16px;top:497.70000000000005px;width:69.5px;height:24.1px;background:#e9e9e9;border-bottom:1px solid #e3e3e3"></div>
<div class="a" style="left:190.5px;top:497.70000000000005px;width:96px;height:24.1px;background:#f0f0f0;border-bottom:1px solid #e7e7e7"></div>
<div class="a" style="left:85.0px;top:497.70000000000005px;width:1px;height:24.1px;background:#e7e7e7"></div>
<div class="a" style="left:190.0px;top:497.70000000000005px;width:1px;height:24.1px;background:#e7e7e7"></div>
<div class="a" style="left:286.0px;top:497.70000000000005px;width:1px;height:24.1px;background:#e7e7e7"></div>
<div class="c r" style="top:498.20000000000005px;left:16px;width:66.0px">10.2020</div>
<div class="c r" style="top:498.20000000000005px;left:85.5px;width:97.7px">30,000</div>
<div class="c r" style="top:498.20000000000005px;left:190.5px;width:88.7px">30,000</div>
<div class="c r" style="top:498.20000000000005px;left:286.5px;width:106.5px">0,000</div>
<div class="a" style="left:16px;top:521.8000000000001px;width:385px;height:24.1px;background:#ececec;border-bottom:1px solid #e5e5e5"></div>
<div class="a" style="left:16px;top:521.8000000000001px;width:69.5px;height:24.1px;background:#e9e9e9;border-bottom:1px solid #e3e3e3"></div>
<div class="a" style="left:190.5px;top:521.8000000000001px;width:96px;height:24.1px;background:#f0f0f0;border-bottom:1px solid #e7e7e7"></div>
<div class="a" style="left:85.0px;top:521.8000000000001px;width:1px;height:24.1px;background:#e7e7e7"></div>
<div class="a" style="left:190.0px;top:521.8000000000001px;width:1px;height:24.1px;background:#e7e7e7"></div>
<div class="a" style="left:286.0px;top:521.8000000000001px;width:1px;height:24.1px;background:#e7e7e7"></div>
<div class="c r" style="top:522.3000000000001px;left:16px;width:66.0px">11.2020</div>
<div class="c r" style="top:522.3000000000001px;left:85.5px;width:97.7px">50,000</div>
<div class="c r" style="top:522.3000000000001px;left:190.5px;width:88.7px">50,000</div>
<div class="c r" style="top:522.3000000000001px;left:286.5px;width:106.5px">0,000</div>
<div class="a" style="left:16px;top:545.9000000000001px;width:385px;height:24.1px;background:#ececec;border-bottom:1px solid #e5e5e5"></div>
<div class="a" style="left:16px;top:545.9000000000001px;width:69.5px;height:24.1px;background:#e9e9e9;border-bottom:1px solid #e3e3e3"></div>
<div class="a" style="left:190.5px;top:545.9000000000001px;width:96px;height:24.1px;background:#f0f0f0;border-bottom:1px solid #e7e7e7"></div>
<div class="a" style="left:85.0px;top:545.9000000000001px;width:1px;height:24.1px;background:#e7e7e7"></div>
<div class="a" style="left:190.0px;top:545.9000000000001px;width:1px;height:24.1px;background:#e7e7e7"></div>
<div class="a" style="left:286.0px;top:545.9000000000001px;width:1px;height:24.1px;background:#e7e7e7"></div>
<div class="c r" style="top:546.4000000000001px;left:16px;width:66.0px">12.2020</div>
<div class="c r" style="top:546.4000000000001px;left:85.5px;width:97.7px">45,000</div>
<div class="c r" style="top:546.4000000000001px;left:190.5px;width:88.7px">45,000</div>
<div class="c r" style="top:546.4000000000001px;left:286.5px;width:106.5px">0,000</div>
<div class="a" style="left:16px;top:570.0px;width:385px;height:24.1px;background:#ececec;border-bottom:1px solid #e5e5e5"></div>
<div class="a" style="left:16px;top:570.0px;width:69.5px;height:24.1px;background:#e9e9e9;border-bottom:1px solid #e3e3e3"></div>
<div class="a" style="left:190.5px;top:570.0px;width:96px;height:24.1px;background:#f0f0f0;border-bottom:1px solid #e7e7e7"></div>
<div class="a" style="left:85.0px;top:570.0px;width:1px;height:24.1px;background:#e7e7e7"></div>
<div class="a" style="left:190.0px;top:570.0px;width:1px;height:24.1px;background:#e7e7e7"></div>
<div class="a" style="left:286.0px;top:570.0px;width:1px;height:24.1px;background:#e7e7e7"></div>
<div class="c r" style="top:570.5px;left:16px;width:66.0px">01.2021</div>
<div class="c r" style="top:570.5px;left:85.5px;width:97.7px">20,000</div>
<div class="c r" style="top:570.5px;left:190.5px;width:88.7px">20,000</div>
<div class="c r" style="top:570.5px;left:286.5px;width:106.5px">0,000</div>
<div class="a" style="left:16px;top:594.1px;width:385px;height:24.1px;background:#ececec;border-bottom:1px solid #e5e5e5"></div>
<div class="a" style="left:16px;top:594.1px;width:69.5px;height:24.1px;background:#e9e9e9;border-bottom:1px solid #e3e3e3"></div>
<div class="a" style="left:190.5px;top:594.1px;width:96px;height:24.1px;background:#f0f0f0;border-bottom:1px solid #e7e7e7"></div>
<div class="a" style="left:85.0px;top:594.1px;width:1px;height:24.1px;background:#e7e7e7"></div>
<div class="a" style="left:190.0px;top:594.1px;width:1px;height:24.1px;background:#e7e7e7"></div>
<div class="a" style="left:286.0px;top:594.1px;width:1px;height:24.1px;background:#e7e7e7"></div>
<div class="c r" style="top:594.6px;left:16px;width:66.0px">02.2021</div>
<div class="c r" style="top:594.6px;left:85.5px;width:97.7px">10,000</div>
<div class="c r" style="top:594.6px;left:190.5px;width:88.7px">30,000</div>
<div class="c r" style="top:594.6px;left:286.5px;width:106.5px">20,000</div>
<div class="a" style="left:16px;top:618.2px;width:385px;height:24.1px;background:#ececec;border-bottom:1px solid #e5e5e5"></div>
<div class="a" style="left:16px;top:618.2px;width:69.5px;height:24.1px;background:#e9e9e9;border-bottom:1px solid #e3e3e3"></div>
<div class="a" style="left:190.5px;top:618.2px;width:96px;height:24.1px;background:#f0f0f0;border-bottom:1px solid #e7e7e7"></div>
<div class="a" style="left:85.0px;top:618.2px;width:1px;height:24.1px;background:#e7e7e7"></div>
<div class="a" style="left:190.0px;top:618.2px;width:1px;height:24.1px;background:#e7e7e7"></div>
<div class="a" style="left:286.0px;top:618.2px;width:1px;height:24.1px;background:#e7e7e7"></div>
<div class="c r" style="top:618.7px;left:16px;width:66.0px">03.2021</div>
<div class="c r" style="top:618.7px;left:85.5px;width:97.7px">30,000</div>
<div class="c r" style="top:618.7px;left:190.5px;width:88.7px">30,000</div>
<div class="c r" style="top:618.7px;left:286.5px;width:106.5px">0,000</div>
<div class="a" style="left:16px;top:642.3000000000001px;width:385px;height:24.1px;background:#ececec;border-bottom:1px solid #e5e5e5"></div>
<div class="a" style="left:16px;top:642.3000000000001px;width:69.5px;height:24.1px;background:#e9e9e9;border-bottom:1px solid #e3e3e3"></div>
<div class="a" style="left:190.5px;top:642.3000000000001px;width:96px;height:24.1px;background:#f0f0f0;border-bottom:1px solid #e7e7e7"></div>
<div class="a" style="left:85.0px;top:642.3000000000001px;width:1px;height:24.1px;background:#e7e7e7"></div>
<div class="a" style="left:190.0px;top:642.3000000000001px;width:1px;height:24.1px;background:#e7e7e7"></div>
<div class="a" style="left:286.0px;top:642.3000000000001px;width:1px;height:24.1px;background:#e7e7e7"></div>
<div class="c r" style="top:642.8000000000001px;left:16px;width:66.0px">04.2021</div>
<div class="c r" style="top:642.8000000000001px;left:85.5px;width:97.7px">55,000</div>
<div class="c r" style="top:642.8000000000001px;left:190.5px;width:88.7px">30,000</div>
<div class="c r" style="top:642.8000000000001px;left:286.5px;width:111.0px">25,000-</div>
<div class="a" style="left:16px;top:666.4000000000001px;width:385px;height:24.1px;background:#ececec;border-bottom:1px solid #e5e5e5"></div>
<div class="a" style="left:16px;top:666.4000000000001px;width:69.5px;height:24.1px;background:#e9e9e9;border-bottom:1px solid #e3e3e3"></div>
<div class="a" style="left:190.5px;top:666.4000000000001px;width:96px;height:24.1px;background:#f0f0f0;border-bottom:1px solid #e7e7e7"></div>
<div class="a" style="left:85.0px;top:666.4000000000001px;width:1px;height:24.1px;background:#e7e7e7"></div>
<div class="a" style="left:190.0px;top:666.4000000000001px;width:1px;height:24.1px;background:#e7e7e7"></div>
<div class="a" style="left:286.0px;top:666.4000000000001px;width:1px;height:24.1px;background:#e7e7e7"></div>
<div class="c r" style="top:666.9000000000001px;left:16px;width:66.0px">05.2021</div>
<div class="c r" style="top:666.9000000000001px;left:85.5px;width:97.7px">40,000</div>
<div class="c r" style="top:666.9000000000001px;left:190.5px;width:88.7px">30,000</div>
<div class="c r" style="top:666.9000000000001px;left:286.5px;width:111.0px">10,000-</div>
<div class="a" style="left:16px;top:690.5px;width:385px;height:24.1px;background:#ececec;border-bottom:1px solid #e5e5e5"></div>
<div class="a" style="left:16px;top:690.5px;width:69.5px;height:24.1px;background:#e9e9e9;border-bottom:1px solid #e3e3e3"></div>
<div class="a" style="left:190.5px;top:690.5px;width:96px;height:24.1px;background:#f0f0f0;border-bottom:1px solid #e7e7e7"></div>
<div class="a" style="left:85.0px;top:690.5px;width:1px;height:24.1px;background:#e7e7e7"></div>
<div class="a" style="left:190.0px;top:690.5px;width:1px;height:24.1px;background:#e7e7e7"></div>
<div class="a" style="left:286.0px;top:690.5px;width:1px;height:24.1px;background:#e7e7e7"></div>
<div class="c r" style="top:691.0px;left:16px;width:66.0px">06.2021</div>
<div class="c r" style="top:691.0px;left:85.5px;width:97.7px">30,000</div>
<div class="c r" style="top:691.0px;left:190.5px;width:88.7px">30,000</div>
<div class="c r" style="top:691.0px;left:286.5px;width:106.5px">0,000</div>
<div class="a" style="left:401px;top:473.6px;width:13px;height:241.39999999999998px;background:#fff"></div>
<div class="a" style="left:402px;top:498.5px;width:10.5px;height:36px;background:#999"></div>
<svg class="a" style="left:401px;top:474px" width="12" height="22"><path d="M3.2 6.2l2.8-2.6 2.8 2.6M3.2 15.2l2.8 2.6 2.8-2.6" fill="none" stroke="#0a6ed1" stroke-width="1.2"/></svg>
<svg class="a" style="left:401px;top:690px" width="12" height="22"><path d="M3.2 6.2l2.8-2.6 2.8 2.6M3.2 15.2l2.8 2.6 2.8-2.6" fill="none" stroke="#0a6ed1" stroke-width="1.2"/></svg>
<div class="a" style="left:16px;top:715px;width:398px;height:1px;background:#dedede"></div>
<div class="a" style="left:16px;top:716px;width:385px;height:14px;background:#fff"></div>
<div class="a" style="left:40px;top:718px;width:250px;height:11px;background:#999"></div>
<div class="a" style="left:401px;top:716px;width:13px;height:14px;background:#f0f0f0"></div>
<svg class="a" style="left:15px;top:717.5px" width="22" height="12"><path d="M7.6 2.6L4.6 5.6 7.6 8.6M16.6 2.6l3 3-3 3" fill="none" stroke="#0a6ed1" stroke-width="1.4"/></svg>
<svg class="a" style="left:376px;top:717.5px" width="22" height="12"><path d="M7.6 2.6L4.6 5.6 7.6 8.6M16.6 2.6l3 3-3 3" fill="none" stroke="#0a6ed1" stroke-width="1.4"/></svg>
<div class="a" style="left:415.2px;top:343px;width:6.3px;height:389px;background:#e9eaeb"></div>
<div class="a dot" style="left:417.8px;top:530.3px;background:#0b5fb5"></div>
<div class="a dot" style="left:417.8px;top:534.1px;background:#0b5fb5"></div>
<div class="a dot" style="left:417.8px;top:537.9px;background:#0b5fb5"></div>
<div class="a dot" style="left:417.8px;top:541.3px;background:#0b5fb5"></div>
<div class="a" style="left:421.5px;top:343px;width:966px;height:390px;background:#f7f7f7;border-right:2px solid #e6e6e6;border-bottom:2px solid #e6e6e6"></div>
<div class="a btn" style="left:422.2px;top:344.2px;width:23.4px;height:24px;border-bottom:none;border-bottom-left-radius:0;border-bottom-right-radius:0;height:19.2px;overflow:hidden"><svg class="a" style="left:-1.5px;top:-1.5px" width="24" height="24" viewBox="0 0 24 24"><rect x="5.6" y="7.2" width="12.7" height="12" fill="none" stroke="#1a6fb9" stroke-width="1.2"/><path d="M9.7 11.3l4.5 4.5M14.2 11.3l-4.5 4.5" stroke="#1a6fb9" stroke-width="1.5"/></svg></div>
<div class="a btn" style="left:452.6px;top:344.2px;width:23.4px;height:24px;border-bottom:none;border-bottom-left-radius:0;border-bottom-right-radius:0;height:19.2px;overflow:hidden"><svg class="a" style="left:-1.5px;top:-1.5px" width="24" height="24" viewBox="0 0 24 24"><rect x="5.5" y="7" width="12.5" height="11.7" fill="none" stroke="#1a6fb9" stroke-width="1.2"/><circle cx="11.75" cy="9.4" r="0.9" fill="#1a6fb9"/><path d="M10.3 11.2h2.2v5h1.2v0.9h-3.9v-0.9h1.2v-4.1h-0.7z" fill="#1a6fb9"/></svg></div>
<div class="a btn" style="left:483px;top:344.2px;width:47px;height:24px;border-bottom:none;border-bottom-left-radius:0;border-bottom-right-radius:0;height:19.2px;overflow:hidden"><svg class="a" style="left:-1.5px;top:-1.5px" width="24" height="24" viewBox="0 0 24 24"><path d="M4.4 5.1h10.9M4.4 8.8h10.9M4.4 12.5h6M4.4 16.4h4.8M4.4 5.1v11.3M8 5.1v11.3M11.6 5.1v7.4M15.3 5.1v5.5" fill="none" stroke="#1a6fb9" stroke-width="1.1"/><circle cx="13.9" cy="14.9" r="2.6" fill="#fff" stroke="#1a6fb9" stroke-width="1.5"/><path d="M13.9 10.6v1.6M13.9 17.6v1.6M9.6 14.9h1.6M16.6 14.9h1.6M10.9 11.9l1.1 1.1M15.8 16.8l1.1 1.1M10.9 17.9l1.1-1.1M15.8 13l1.1-1.1" stroke="#1a6fb9" stroke-width="1.5"/></svg><svg class="a" style="left:21.1px;top:-1.5px" width="24" height="24" viewBox="0 0 24 24"><path d="M6.6 10.6l5.5 5 5.5-5" fill="none" stroke="#1a6fb9" stroke-width="1.2"/></svg><div class="a" style="left:22.2px;top:0;width:1.2px;height:20.7px;background:#3b86c9"></div></div>
<div class="a btn" style="left:537px;top:344.2px;width:23.5px;height:24px;border-bottom:none;border-bottom-left-radius:0;border-bottom-right-radius:0;height:19.2px;overflow:hidden"><svg class="a" style="left:-1.5px;top:-1.5px" width="24" height="24" viewBox="0 0 24 24"><circle cx="12" cy="12.3" r="6.6" fill="none" stroke="#1a6fb9" stroke-width="1.2"/><path d="M9.8 10.4c0-1.4 1-2.2 2.2-2.2s2.2 0.8 2.2 2c0 1.6-2 1.6-2 3.4" fill="none" stroke="#1a6fb9" stroke-width="1.3"/><circle cx="12.1" cy="16" r="0.8" fill="#1a6fb9"/></svg></div>
<div class="a btn" style="left:568px;top:344.2px;width:23.4px;height:24px;border-bottom:none;border-bottom-left-radius:0;border-bottom-right-radius:0;height:19.2px;overflow:hidden"><svg class="a" style="left:-1.5px;top:-1.5px" width="24" height="24" viewBox="0 0 24 24"><path d="M6.2 9.2a3.3 3.3 0 0 0 4.5 3.2l5.8 6.2a1.2 1.2 0 0 0 1.8-1.7l-5.9-6.1a3.3 3.3 0 0 0-3.5-4.6l1.9 1.9-0.7 2.3-2.3 0.7z" fill="none" stroke="#1a6fb9" stroke-width="1.2"/></svg></div>
<div class="a sep" style="left:599px;top:345px;height:18px"></div>
<div class="a btn" style="left:606.6px;top:344.2px;width:23.4px;height:24px;border-bottom:none;border-bottom-left-radius:0;border-bottom-right-radius:0;height:19.2px;overflow:hidden"><svg class="a" style="left:-1.5px;top:-1.5px" width="24" height="24" viewBox="0 0 24 24"><path d="M9 6.5h5v3M6.5 9.5v9.5h7" fill="none" stroke="#1a6fb9" stroke-width="1.1"/><path d="M6.5 12.5h6M6.5 15h6M6.5 17.5h6M8.8 10v9M11 10v9" stroke="#1a6fb9" stroke-width="0.8"/><path d="M13.2 11.5l5 7M18.2 11.5l-5 7" stroke="#1a6fb9" stroke-width="1.5"/><path d="M6.8 9.8l2.3-3.3" stroke="#1a6fb9" stroke-width="1.1"/></svg></div>
<div class="a btn" style="left:637px;top:344.2px;width:23.4px;height:24px;border-bottom:none;border-bottom-left-radius:0;border-bottom-right-radius:0;height:19.2px;overflow:hidden"><svg class="a" style="left:-1.5px;top:-1.5px" width="24" height="24" viewBox="0 0 24 24"><path d="M7.5 8.3V6h8.8v2.3" fill="none" stroke="#1a6fb9" stroke-width="1.1"/><rect x="4.9" y="8.3" width="13.7" height="6.3" rx="1" fill="none" stroke="#1a6fb9" stroke-width="1.1"/><rect x="7.5" y="12" width="8.5" height="7.7" rx="0.5" fill="#fff" stroke="#1a6fb9" stroke-width="1.1"/><path d="M9.9 16h3.3" stroke="#1a6fb9" stroke-width="1.6" opacity="0.7"/><path d="M15 10.3h2.2" stroke="#1a6fb9" stroke-width="0.9"/></svg></div>
<svg class="a" style="left:0;top:0" width="1400" height="788" font-family="Liberation Sans"><defs><linearGradient id="pg" x1="0" y1="0" x2="0" y2="1"><stop offset="0" stop-color="#e6f2f9"/><stop offset="1" stop-color="#eaf4fb"/></linearGradient></defs><rect x="444.0" y="377.0" width="932.0" height="276.0" fill="url(#pg)"/><line x1="461.92" y1="377.0" x2="461.92" y2="653.0" stroke="#d0e4f2" stroke-width="1.1"/><line x1="479.85" y1="377.0" x2="479.85" y2="653.0" stroke="#d0e4f2" stroke-width="1.1"/><line x1="497.77" y1="377.0" x2="497.77" y2="653.0" stroke="#d0e4f2" stroke-width="1.1"/><line x1="515.69" y1="377.0" x2="515.69" y2="653.0" stroke="#d0e4f2" stroke-width="1.1"/><line x1="533.62" y1="377.0" x2="533.62" y2="653.0" stroke="#d0e4f2" stroke-width="1.1"/><line x1="551.54" y1="377.0" x2="551.54" y2="653.0" stroke="#d0e4f2" stroke-width="1.1"/><line x1="569.46" y1="377.0" x2="569.46" y2="653.0" stroke="#d0e4f2" stroke-width="1.1"/><line x1="587.38" y1="377.0" x2="587.38" y2="653.0" stroke="#d0e4f2" stroke-width="1.1"/><line x1="605.31" y1="377.0" x2="605.31" y2="653.0" stroke="#d0e4f2" stroke-width="1.1"/><line x1="623.23" y1="377.0" x2="623.23" y2="653.0" stroke="#d0e4f2" stroke-width="1.1"/><line x1="641.15" y1="377.0" x2="641.15" y2="653.0" stroke="#d0e4f2" stroke-width="1.1"/><line x1="659.08" y1="377.0" x2="659.08" y2="653.0" stroke="#d0e4f2" stroke-width="1.1"/><line x1="677.00" y1="377.0" x2="677.00" y2="653.0" stroke="#d0e4f2" stroke-width="1.1"/><line x1="694.92" y1="377.0" x2="694.92" y2="653.0" stroke="#d0e4f2" stroke-width="1.1"/><line x1="712.85" y1="377.0" x2="712.85" y2="653.0" stroke="#d0e4f2" stroke-width="1.1"/><line x1="730.77" y1="377.0" x2="730.77" y2="653.0" stroke="#d0e4f2" stroke-width="1.1"/><line x1="748.69" y1="377.0" x2="748.69" y2="653.0" stroke="#d0e4f2" stroke-width="1.1"/><line x1="766.62" y1="377.0" x2="766.62" y2="653.0" stroke="#d0e4f2" stroke-width="1.1"/><line x1="784.54" y1="377.0" x2="784.54" y2="653.0" stroke="#d0e4f2" stroke-width="1.1"/><line x1="802.46" y1="377.0" x2="802.46" y2="653.0" stroke="#d0e4f2" stroke-width="1.1"/><line x1="820.38" y1="377.0" x2="820.38" y2="653.0" stroke="#d0e4f2" stroke-width="1.1"/><line x1="838.31" y1="377.0" x2="838.31" y2="653.0" stroke="#d0e4f2" stroke-width="1.1"/><line x1="856.23" y1="377.0" x2="856.23" y2="653.0" stroke="#d0e4f2" stroke-width="1.1"/><line x1="874.15" y1="377.0" x2="874.15" y2="653.0" stroke="#d0e4f2" stroke-width="1.1"/><line x1="892.08" y1="377.0" x2="892.08" y2="653.0" stroke="#d0e4f2" stroke-width="1.1"/><line x1="910.00" y1="377.0" x2="910.00" y2="653.0" stroke="#d0e4f2" stroke-width="1.1"/><line x1="927.92" y1="377.0" x2="927.92" y2="653.0" stroke="#d0e4f2" stroke-width="1.1"/><line x1="945.85" y1="377.0" x2="945.85" y2="653.0" stroke="#d0e4f2" stroke-width="1.1"/><line x1="963.77" y1="377.0" x2="963.77" y2="653.0" stroke="#d0e4f2" stroke-width="1.1"/><line x1="981.69" y1="377.0" x2="981.69" y2="653.0" stroke="#d0e4f2" stroke-width="1.1"/><line x1="999.62" y1="377.0" x2="999.62" y2="653.0" stroke="#d0e4f2" stroke-width="1.1"/><line x1="1017.54" y1="377.0" x2="1017.54" y2="653.0" stroke="#d0e4f2" stroke-width="1.1"/><line x1="1035.46" y1="377.0" x2="1035.46" y2="653.0" stroke="#d0e4f2" stroke-width="1.1"/><line x1="1053.38" y1="377.0" x2="1053.38" y2="653.0" stroke="#d0e4f2" stroke-width="1.1"/><line x1="1071.31" y1="377.0" x2="1071.31" y2="653.0" stroke="#d0e4f2" stroke-width="1.1"/><line x1="1089.23" y1="377.0" x2="1089.23" y2="653.0" stroke="#d0e4f2" stroke-width="1.1"/><line x1="1107.15" y1="377.0" x2="1107.15" y2="653.0" stroke="#d0e4f2" stroke-width="1.1"/><line x1="1125.08" y1="377.0" x2="1125.08" y2="653.0" stroke="#d0e4f2" stroke-width="1.1"/><line x1="1143.00" y1="377.0" x2="1143.00" y2="653.0" stroke="#d0e4f2" stroke-width="1.1"/><line x1="1160.92" y1="377.0" x2="1160.92" y2="653.0" stroke="#d0e4f2" stroke-width="1.1"/><line x1="1178.85" y1="377.0" x2="1178.85" y2="653.0" stroke="#d0e4f2" stroke-width="1.1"/><line x1="1196.77" y1="377.0" x2="1196.77" y2="653.0" stroke="#d0e4f2" stroke-width="1.1"/><line x1="1214.69" y1="377.0" x2="1214.69" y2="653.0" stroke="#d0e4f2" stroke-width="1.1"/><line x1="1232.62" y1="377.0" x2="1232.62" y2="653.0" stroke="#d0e4f2" stroke-width="1.1"/><line x1="1250.54" y1="377.0" x2="1250.54" y2="653.0" stroke="#d0e4f2" stroke-width="1.1"/><line x1="1268.46" y1="377.0" x2="1268.46" y2="653.0" stroke="#d0e4f2" stroke-width="1.1"/><line x1="1286.38" y1="377.0" x2="1286.38" y2="653.0" stroke="#d0e4f2" stroke-width="1.1"/><line x1="1304.31" y1="377.0" x2="1304.31" y2="653.0" stroke="#d0e4f2" stroke-width="1.1"/><line x1="1322.23" y1="377.0" x2="1322.23" y2="653.0" stroke="#d0e4f2" stroke-width="1.1"/><line x1="1340.15" y1="377.0" x2="1340.15" y2="653.0" stroke="#d0e4f2" stroke-width="1.1"/><line x1="1358.08" y1="377.0" x2="1358.08" y2="653.0" stroke="#d0e4f2" stroke-width="1.1"/><line x1="1376.00" y1="377.0" x2="1376.00" y2="653.0" stroke="#d0e4f2" stroke-width="1.1"/><line x1="444.0" y1="635.75" x2="1376.0" y2="635.75" stroke="#dae8f2" stroke-width="1" stroke-dasharray="2,2.4"/><line x1="441.0" y1="635.75" x2="444.0" y2="635.75" stroke="#b5cce0" stroke-width="1"/><line x1="444.0" y1="618.50" x2="1376.0" y2="618.50" stroke="#dae8f2" stroke-width="1" stroke-dasharray="2,2.4"/><line x1="441.0" y1="618.50" x2="444.0" y2="618.50" stroke="#b5cce0" stroke-width="1"/><line x1="444.0" y1="601.25" x2="1376.0" y2="601.25" stroke="#dae8f2" stroke-width="1" stroke-dasharray="2,2.4"/><line x1="441.0" y1="601.25" x2="444.0" y2="601.25" stroke="#b5cce0" stroke-width="1"/><line x1="444.0" y1="584.00" x2="1376.0" y2="584.00" stroke="#c8dcec" stroke-width="1"/><line x1="439.0" y1="584.00" x2="444.0" y2="584.00" stroke="#b5cce0" stroke-width="1"/><line x1="444.0" y1="566.75" x2="1376.0" y2="566.75" stroke="#dae8f2" stroke-width="1" stroke-dasharray="2,2.4"/><line x1="441.0" y1="566.75" x2="444.0" y2="566.75" stroke="#b5cce0" stroke-width="1"/><line x1="444.0" y1="549.50" x2="1376.0" y2="549.50" stroke="#dae8f2" stroke-width="1" stroke-dasharray="2,2.4"/><line x1="441.0" y1="549.50" x2="444.0" y2="549.50" stroke="#b5cce0" stroke-width="1"/><line x1="444.0" y1="532.25" x2="1376.0" y2="532.25" stroke="#dae8f2" stroke-width="1" stroke-dasharray="2,2.4"/><line x1="441.0" y1="532.25" x2="444.0" y2="532.25" stroke="#b5cce0" stroke-width="1"/><line x1="444.0" y1="515.00" x2="1376.0" y2="515.00" stroke="#c8dcec" stroke-width="1"/><line x1="439.0" y1="515.00" x2="444.0" y2="515.00" stroke="#b5cce0" stroke-width="1"/><line x1="444.0" y1="497.75" x2="1376.0" y2="497.75" stroke="#dae8f2" stroke-width="1" stroke-dasharray="2,2.4"/><line x1="441.0" y1="497.75" x2="444.0" y2="497.75" stroke="#b5cce0" stroke-width="1"/><line x1="444.0" y1="480.50" x2="1376.0" y2="480.50" stroke="#dae8f2" stroke-width="1" stroke-dasharray="2,2.4"/><line x1="441.0" y1="480.50" x2="444.0" y2="480.50" stroke="#b5cce0" stroke-width="1"/><line x1="444.0" y1="463.25" x2="1376.0" y2="463.25" stroke="#dae8f2" stroke-width="1" stroke-dasharray="2,2.4"/><line x1="441.0" y1="463.25" x2="444.0" y2="463.25" stroke="#b5cce0" stroke-width="1"/><line x1="444.0" y1="446.00" x2="1376.0" y2="446.00" stroke="#c8dcec" stroke-width="1"/><line x1="439.0" y1="446.00" x2="444.0" y2="446.00" stroke="#b5cce0" stroke-width="1"/><line x1="444.0" y1="428.75" x2="1376.0" y2="428.75" stroke="#dae8f2" stroke-width="1" stroke-dasharray="2,2.4"/><line x1="441.0" y1="428.75" x2="444.0" y2="428.75" stroke="#b5cce0" stroke-width="1"/><line x1="444.0" y1="411.50" x2="1376.0" y2="411.50" stroke="#dae8f2" stroke-width="1" stroke-dasharray="2,2.4"/><line x1="441.0" y1="411.50" x2="444.0" y2="411.50" stroke="#b5cce0" stroke-width="1"/><line x1="444.0" y1="394.25" x2="1376.0" y2="394.25" stroke="#dae8f2" stroke-width="1" stroke-dasharray="2,2.4"/><line x1="441.0" y1="394.25" x2="444.0" y2="394.25" stroke="#b5cce0" stroke-width="1"/><line x1="444.0" y1="377.00" x2="1376.0" y2="377.00" stroke="#c8dcec" stroke-width="1"/><line x1="439.0" y1="377.00" x2="444.0" y2="377.00" stroke="#b5cce0" stroke-width="1"/><line x1="444.0" y1="377.0" x2="444.0" y2="657.0" stroke="#b3cbe0" stroke-width="1.5"/><line x1="444.0" y1="653.0" x2="1376.0" y2="653.0" stroke="#b3cbe0" stroke-width="1.2"/><line x1="444.00" y1="653.0" x2="444.00" y2="657.0" stroke="#b3cbe0" stroke-width="1"/><line x1="461.92" y1="653.0" x2="461.92" y2="657.0" stroke="#b3cbe0" stroke-width="1"/><line x1="479.85" y1="653.0" x2="479.85" y2="657.0" stroke="#b3cbe0" stroke-width="1"/><line x1="497.77" y1="653.0" x2="497.77" y2="657.0" stroke="#b3cbe0" stroke-width="1"/><line x1="515.69" y1="653.0" x2="515.69" y2="657.0" stroke="#b3cbe0" stroke-width="1"/><line x1="533.62" y1="653.0" x2="533.62" y2="657.0" stroke="#b3cbe0" stroke-width="1"/><line x1="551.54" y1="653.0" x2="551.54" y2="657.0" stroke="#b3cbe0" stroke-width="1"/><line x1="569.46" y1="653.0" x2="569.46" y2="657.0" stroke="#b3cbe0" stroke-width="1"/><line x1="587.38" y1="653.0" x2="587.38" y2="657.0" stroke="#b3cbe0" stroke-width="1"/><line x1="605.31" y1="653.0" x2="605.31" y2="657.0" stroke="#b3cbe0" stroke-width="1"/><line x1="623.23" y1="653.0" x2="623.23" y2="657.0" stroke="#b3cbe0" stroke-width="1"/><line x1="641.15" y1="653.0" x2="641.15" y2="657.0" stroke="#b3cbe0" stroke-width="1"/><line x1="659.08" y1="653.0" x2="659.08" y2="657.0" stroke="#b3cbe0" stroke-width="1"/><line x1="677.00" y1="653.0" x2="677.00" y2="657.0" stroke="#b3cbe0" stroke-width="1"/><line x1="694.92" y1="653.0" x2="694.92" y2="657.0" stroke="#b3cbe0" stroke-width="1"/><line x1="712.85" y1="653.0" x2="712.85" y2="657.0" stroke="#b3cbe0" stroke-width="1"/><line x1="730.77" y1="653.0" x2="730.77" y2="657.0" stroke="#b3cbe0" stroke-width="1"/><line x1="748.69" y1="653.0" x2="748.69" y2="657.0" stroke="#b3cbe0" stroke-width="1"/><line x1="766.62" y1="653.0" x2="766.62" y2="657.0" stroke="#b3cbe0" stroke-width="1"/><line x1="784.54" y1="653.0" x2="784.54" y2="657.0" stroke="#b3cbe0" stroke-width="1"/><line x1="802.46" y1="653.0" x2="802.46" y2="657.0" stroke="#b3cbe0" stroke-width="1"/><line x1="820.38" y1="653.0" x2="820.38" y2="657.0" stroke="#b3cbe0" stroke-width="1"/><line x1="838.31" y1="653.0" x2="838.31" y2="657.0" stroke="#b3cbe0" stroke-width="1"/><line x1="856.23" y1="653.0" x2="856.23" y2="657.0" stroke="#b3cbe0" stroke-width="1"/><line x1="874.15" y1="653.0" x2="874.15" y2="657.0" stroke="#b3cbe0" stroke-width="1"/><line x1="892.08" y1="653.0" x2="892.08" y2="657.0" stroke="#b3cbe0" stroke-width="1"/><line x1="910.00" y1="653.0" x2="910.00" y2="657.0" stroke="#b3cbe0" stroke-width="1"/><line x1="927.92" y1="653.0" x2="927.92" y2="657.0" stroke="#b3cbe0" stroke-width="1"/><line x1="945.85" y1="653.0" x2="945.85" y2="657.0" stroke="#b3cbe0" stroke-width="1"/><line x1="963.77" y1="653.0" x2="963.77" y2="657.0" stroke="#b3cbe0" stroke-width="1"/><line x1="981.69" y1="653.0" x2="981.69" y2="657.0" stroke="#b3cbe0" stroke-width="1"/><line x1="999.62" y1="653.0" x2="999.62" y2="657.0" stroke="#b3cbe0" stroke-width="1"/><line x1="1017.54" y1="653.0" x2="1017.54" y2="657.0" stroke="#b3cbe0" stroke-width="1"/><line x1="1035.46" y1="653.0" x2="1035.46" y2="657.0" stroke="#b3cbe0" stroke-width="1"/><line x1="1053.38" y1="653.0" x2="1053.38" y2="657.0" stroke="#b3cbe0" stroke-width="1"/><line x1="1071.31" y1="653.0" x2="1071.31" y2="657.0" stroke="#b3cbe0" stroke-width="1"/><line x1="1089.23" y1="653.0" x2="1089.23" y2="657.0" stroke="#b3cbe0" stroke-width="1"/><line x1="1107.15" y1="653.0" x2="1107.15" y2="657.0" stroke="#b3cbe0" stroke-width="1"/><line x1="1125.08" y1="653.0" x2="1125.08" y2="657.0" stroke="#b3cbe0" stroke-width="1"/><line x1="1143.00" y1="653.0" x2="1143.00" y2="657.0" stroke="#b3cbe0" stroke-width="1"/><line x1="1160.92" y1="653.0" x2="1160.92" y2="657.0" stroke="#b3cbe0" stroke-width="1"/><line x1="1178.85" y1="653.0" x2="1178.85" y2="657.0" stroke="#b3cbe0" stroke-width="1"/><line x1="1196.77" y1="653.0" x2="1196.77" y2="657.0" stroke="#b3cbe0" stroke-width="1"/><line x1="1214.69" y1="653.0" x2="1214.69" y2="657.0" stroke="#b3cbe0" stroke-width="1"/><line x1="1232.62" y1="653.0" x2="1232.62" y2="657.0" stroke="#b3cbe0" stroke-width="1"/><line x1="1250.54" y1="653.0" x2="1250.54" y2="657.0" stroke="#b3cbe0" stroke-width="1"/><line x1="1268.46" y1="653.0" x2="1268.46" y2="657.0" stroke="#b3cbe0" stroke-width="1"/><line x1="1286.38" y1="653.0" x2="1286.38" y2="657.0" stroke="#b3cbe0" stroke-width="1"/><line x1="1304.31" y1="653.0" x2="1304.31" y2="657.0" stroke="#b3cbe0" stroke-width="1"/><line x1="1322.23" y1="653.0" x2="1322.23" y2="657.0" stroke="#b3cbe0" stroke-width="1"/><line x1="1340.15" y1="653.0" x2="1340.15" y2="657.0" stroke="#b3cbe0" stroke-width="1"/><line x1="1358.08" y1="653.0" x2="1358.08" y2="657.0" stroke="#b3cbe0" stroke-width="1"/><line x1="1376.00" y1="653.0" x2="1376.00" y2="657.0" stroke="#b3cbe0" stroke-width="1"/><text x="437.2" y="656.90" text-anchor="end" font-size="9.4" fill="#333" stroke="#333" stroke-width="0.15">0</text><text x="437.2" y="587.90" text-anchor="end" font-size="9.4" fill="#333" stroke="#333" stroke-width="0.15">20</text><text x="437.2" y="518.90" text-anchor="end" font-size="9.4" fill="#333" stroke="#333" stroke-width="0.15">40</text><text x="437.2" y="449.90" text-anchor="end" font-size="9.4" fill="#333" stroke="#333" stroke-width="0.15">60</text><text x="437.2" y="380.90" text-anchor="end" font-size="9.4" fill="#333" stroke="#333" stroke-width="0.15">80</text><rect x="446.5" y="567.5" width="7.0" height="86.0" fill="#62a7e0" stroke="#353d45" stroke-width="1"/><rect x="453.5" y="567.5" width="7.0" height="86.0" fill="#bde07a" stroke="#374030" stroke-width="1"/><rect x="463.5" y="550.5" width="8.0" height="103.0" fill="#62a7e0" stroke="#353d45" stroke-width="1"/><rect x="471.5" y="550.5" width="7.0" height="103.0" fill="#bde07a" stroke="#374030" stroke-width="1"/><rect x="481.5" y="480.5" width="8.0" height="173.0" fill="#62a7e0" stroke="#353d45" stroke-width="1"/><rect x="489.5" y="480.5" width="7.0" height="173.0" fill="#bde07a" stroke="#374030" stroke-width="1"/><rect x="499.5" y="498.5" width="8.0" height="155.0" fill="#62a7e0" stroke="#353d45" stroke-width="1"/><rect x="507.5" y="498.5" width="7.0" height="155.0" fill="#bde07a" stroke="#374030" stroke-width="1"/><rect x="517.5" y="584.5" width="7.0" height="69.0" fill="#62a7e0" stroke="#353d45" stroke-width="1"/><rect x="524.5" y="584.5" width="8.0" height="69.0" fill="#bde07a" stroke="#374030" stroke-width="1"/><rect x="535.5" y="618.5" width="7.0" height="35.0" fill="#62a7e0" stroke="#353d45" stroke-width="1"/><rect x="542.5" y="550.5" width="8.0" height="103.0" fill="#bde07a" stroke="#374030" stroke-width="1"/><rect x="553.5" y="550.5" width="7.0" height="103.0" fill="#62a7e0" stroke="#353d45" stroke-width="1"/><rect x="560.5" y="550.5" width="8.0" height="103.0" fill="#bde07a" stroke="#374030" stroke-width="1"/><rect x="571.5" y="463.5" width="7.0" height="190.0" fill="#62a7e0" stroke="#353d45" stroke-width="1"/><rect x="578.5" y="550.5" width="7.0" height="103.0" fill="#bde07a" stroke="#374030" stroke-width="1"/><rect x="589.5" y="515.5" width="7.0" height="138.0" fill="#62a7e0" stroke="#353d45" stroke-width="1"/><rect x="596.5" y="550.5" width="7.0" height="103.0" fill="#bde07a" stroke="#374030" stroke-width="1"/><rect x="607.5" y="550.5" width="7.0" height="103.0" fill="#62a7e0" stroke="#353d45" stroke-width="1"/><rect x="614.5" y="550.5" width="7.0" height="103.0" fill="#bde07a" stroke="#374030" stroke-width="1"/><rect x="625.5" y="584.5" width="7.0" height="69.0" fill="#62a7e0" stroke="#353d45" stroke-width="1"/><rect x="632.5" y="550.5" width="7.0" height="103.0" fill="#bde07a" stroke="#374030" stroke-width="1"/><rect x="643.5" y="601.5" width="7.0" height="52.0" fill="#62a7e0" stroke="#353d45" stroke-width="1"/><rect x="650.5" y="550.5" width="7.0" height="103.0" fill="#bde07a" stroke="#374030" stroke-width="1"/><rect x="661.5" y="574.5" width="7.0" height="79.0" fill="#62a7e0" stroke="#353d45" stroke-width="1"/><rect x="668.5" y="550.5" width="7.0" height="103.0" fill="#bde07a" stroke="#374030" stroke-width="1"/><rect x="678.5" y="560.5" width="8.0" height="93.0" fill="#62a7e0" stroke="#353d45" stroke-width="1"/><rect x="686.5" y="574.5" width="7.0" height="79.0" fill="#bde07a" stroke="#374030" stroke-width="1"/><rect x="696.5" y="498.5" width="8.0" height="155.0" fill="#62a7e0" stroke="#353d45" stroke-width="1"/><rect x="704.5" y="574.5" width="7.0" height="79.0" fill="#bde07a" stroke="#374030" stroke-width="1"/><rect x="714.5" y="512.5" width="8.0" height="141.0" fill="#62a7e0" stroke="#353d45" stroke-width="1"/><rect x="722.5" y="574.5" width="7.0" height="79.0" fill="#bde07a" stroke="#374030" stroke-width="1"/><rect x="732.5" y="591.5" width="8.0" height="62.0" fill="#62a7e0" stroke="#353d45" stroke-width="1"/><rect x="740.5" y="560.5" width="7.0" height="93.0" fill="#bde07a" stroke="#374030" stroke-width="1"/><rect x="750.5" y="622.5" width="7.0" height="31.0" fill="#62a7e0" stroke="#353d45" stroke-width="1"/><rect x="757.5" y="560.5" width="8.0" height="93.0" fill="#bde07a" stroke="#374030" stroke-width="1"/><rect x="768.5" y="560.5" width="7.0" height="93.0" fill="#62a7e0" stroke="#353d45" stroke-width="1"/><rect x="775.5" y="560.5" width="8.0" height="93.0" fill="#bde07a" stroke="#374030" stroke-width="1"/><rect x="786.5" y="480.5" width="7.0" height="173.0" fill="#62a7e0" stroke="#353d45" stroke-width="1"/><rect x="793.5" y="560.5" width="8.0" height="93.0" fill="#bde07a" stroke="#374030" stroke-width="1"/><rect x="804.5" y="529.5" width="7.0" height="124.0" fill="#62a7e0" stroke="#353d45" stroke-width="1"/><rect x="811.5" y="560.5" width="7.0" height="93.0" fill="#bde07a" stroke="#374030" stroke-width="1"/><rect x="822.5" y="560.5" width="7.0" height="93.0" fill="#62a7e0" stroke="#353d45" stroke-width="1"/><rect x="829.5" y="560.5" width="7.0" height="93.0" fill="#bde07a" stroke="#374030" stroke-width="1"/><rect x="840.5" y="591.5" width="7.0" height="62.0" fill="#62a7e0" stroke="#353d45" stroke-width="1"/><rect x="847.5" y="560.5" width="7.0" height="93.0" fill="#bde07a" stroke="#374030" stroke-width="1"/><rect x="858.5" y="605.5" width="7.0" height="48.0" fill="#62a7e0" stroke="#353d45" stroke-width="1"/><rect x="865.5" y="560.5" width="7.0" height="93.0" fill="#bde07a" stroke="#374030" stroke-width="1"/><rect x="876.5" y="553.5" width="7.0" height="100.0" fill="#62a7e0" stroke="#353d45" stroke-width="1"/><rect x="883.5" y="560.5" width="7.0" height="93.0" fill="#bde07a" stroke="#374030" stroke-width="1"/><rect x="894.5" y="532.5" width="7.0" height="121.0" fill="#62a7e0" stroke="#353d45" stroke-width="1"/><rect x="901.5" y="560.5" width="7.0" height="93.0" fill="#bde07a" stroke="#374030" stroke-width="1"/><rect x="912.5" y="453.5" width="7.0" height="200.0" fill="#62a7e0" stroke="#353d45" stroke-width="1"/><rect x="919.5" y="560.5" width="7.0" height="93.0" fill="#bde07a" stroke="#374030" stroke-width="1"/><rect x="929.5" y="474.5" width="8.0" height="179.0" fill="#62a7e0" stroke="#353d45" stroke-width="1"/><rect x="937.5" y="553.5" width="7.0" height="100.0" fill="#bde07a" stroke="#374030" stroke-width="1"/><rect x="947.5" y="574.5" width="8.0" height="79.0" fill="#62a7e0" stroke="#353d45" stroke-width="1"/><rect x="955.5" y="532.5" width="7.0" height="121.0" fill="#bde07a" stroke="#374030" stroke-width="1"/><rect x="965.5" y="612.5" width="8.0" height="41.0" fill="#62a7e0" stroke="#353d45" stroke-width="1"/><rect x="973.5" y="532.5" width="7.0" height="121.0" fill="#bde07a" stroke="#374030" stroke-width="1"/><rect x="983.5" y="532.5" width="7.0" height="121.0" fill="#62a7e0" stroke="#353d45" stroke-width="1"/><rect x="990.5" y="532.5" width="8.0" height="121.0" fill="#bde07a" stroke="#374030" stroke-width="1"/><rect x="1001.5" y="436.5" width="7.0" height="217.0" fill="#62a7e0" stroke="#353d45" stroke-width="1"/><rect x="1008.5" y="532.5" width="8.0" height="121.0" fill="#bde07a" stroke="#374030" stroke-width="1"/><rect x="1019.5" y="494.5" width="7.0" height="159.0" fill="#62a7e0" stroke="#353d45" stroke-width="1"/><rect x="1026.5" y="532.5" width="8.0" height="121.0" fill="#bde07a" stroke="#374030" stroke-width="1"/><rect x="1037.5" y="532.5" width="7.0" height="121.0" fill="#62a7e0" stroke="#353d45" stroke-width="1"/><rect x="1044.5" y="532.5" width="7.0" height="121.0" fill="#bde07a" stroke="#374030" stroke-width="1"/><rect x="1055.5" y="574.5" width="7.0" height="79.0" fill="#62a7e0" stroke="#353d45" stroke-width="1"/><rect x="1062.5" y="532.5" width="7.0" height="121.0" fill="#bde07a" stroke="#374030" stroke-width="1"/><rect x="1073.5" y="594.5" width="7.0" height="59.0" fill="#62a7e0" stroke="#353d45" stroke-width="1"/><rect x="1080.5" y="532.5" width="7.0" height="121.0" fill="#bde07a" stroke="#374030" stroke-width="1"/><rect x="1098.5" y="532.5" width="7.0" height="121.0" fill="#bde07a" stroke="#374030" stroke-width="1"/><rect x="1116.5" y="532.5" width="7.0" height="121.0" fill="#bde07a" stroke="#374030" stroke-width="1"/><rect x="1134.5" y="532.5" width="7.0" height="121.0" fill="#bde07a" stroke="#374030" stroke-width="1"/><rect x="1152.5" y="532.5" width="7.0" height="121.0" fill="#bde07a" stroke="#374030" stroke-width="1"/><rect x="1170.5" y="532.5" width="7.0" height="121.0" fill="#bde07a" stroke="#374030" stroke-width="1"/><rect x="1188.5" y="532.5" width="7.0" height="121.0" fill="#bde07a" stroke="#374030" stroke-width="1"/><rect x="1206.5" y="532.5" width="7.0" height="121.0" fill="#bde07a" stroke="#374030" stroke-width="1"/><rect x="1223.5" y="532.5" width="8.0" height="121.0" fill="#bde07a" stroke="#374030" stroke-width="1"/><rect x="1241.5" y="532.5" width="8.0" height="121.0" fill="#bde07a" stroke="#374030" stroke-width="1"/><rect x="1259.5" y="532.5" width="8.0" height="121.0" fill="#bde07a" stroke="#374030" stroke-width="1"/><rect x="1277.5" y="532.5" width="7.0" height="121.0" fill="#bde07a" stroke="#374030" stroke-width="1"/><rect x="1295.5" y="532.5" width="7.0" height="121.0" fill="#bde07a" stroke="#374030" stroke-width="1"/><rect x="1313.5" y="532.5" width="7.0" height="121.0" fill="#bde07a" stroke="#374030" stroke-width="1"/><rect x="1331.5" y="532.5" width="7.0" height="121.0" fill="#bde07a" stroke="#374030" stroke-width="1"/><rect x="1349.5" y="532.5" width="7.0" height="121.0" fill="#bde07a" stroke="#374030" stroke-width="1"/><rect x="1367.5" y="532.5" width="7.0" height="121.0" fill="#bde07a" stroke="#374030" stroke-width="1"/><path d="M452.96 653.00H1098.19V406.32H1367.04" fill="none" stroke="#dcb84a" stroke-width="1.3"/><line x1="1098.19" y1="403.82" x2="1098.19" y2="653.0" stroke="#6f6fa8" stroke-width="1" stroke-dasharray="2,2"/><text transform="translate(448.30,665.9) rotate(45)" font-size="9.1" fill="#111" stroke="#111" stroke-width="0.25">09.2020</text><text transform="translate(484.15,665.9) rotate(45)" font-size="9.1" fill="#111" stroke="#111" stroke-width="0.25">11.2020</text><text transform="translate(519.99,665.9) rotate(45)" font-size="9.1" fill="#111" stroke="#111" stroke-width="0.25">01.2021</text><text transform="translate(555.84,665.9) rotate(45)" font-size="9.1" fill="#111" stroke="#111" stroke-width="0.25">03.2021</text><text transform="translate(591.68,665.9) rotate(45)" font-size="9.1" fill="#111" stroke="#111" stroke-width="0.25">05.2021</text><text transform="translate(627.53,665.9) rotate(45)" font-size="9.1" fill="#111" stroke="#111" stroke-width="0.25">07.2021</text><text transform="translate(663.38,665.9) rotate(45)" font-size="9.1" fill="#111" stroke="#111" stroke-width="0.25">09.2021</text><text transform="translate(699.22,665.9) rotate(45)" font-size="9.1" fill="#111" stroke="#111" stroke-width="0.25">11.2021</text><text transform="translate(735.07,665.9) rotate(45)" font-size="9.1" fill="#111" stroke="#111" stroke-width="0.25">01.2022</text><text transform="translate(770.92,665.9) rotate(45)" font-size="9.1" fill="#111" stroke="#111" stroke-width="0.25">03.2022</text><text transform="translate(806.76,665.9) rotate(45)" font-size="9.1" fill="#111" stroke="#111" stroke-width="0.25">05.2022</text><text transform="translate(842.61,665.9) rotate(45)" font-size="9.1" fill="#111" stroke="#111" stroke-width="0.25">07.2022</text><text transform="translate(878.45,665.9) rotate(45)" font-size="9.1" fill="#111" stroke="#111" stroke-width="0.25">09.2022</text><text transform="translate(914.30,665.9) rotate(45)" font-size="9.1" fill="#111" stroke="#111" stroke-width="0.25">11.2022</text><text transform="translate(950.15,665.9) rotate(45)" font-size="9.1" fill="#111" stroke="#111" stroke-width="0.25">01.2023</text><text transform="translate(985.99,665.9) rotate(45)" font-size="9.1" fill="#111" stroke="#111" stroke-width="0.25">03.2023</text><text transform="translate(1021.84,665.9) rotate(45)" font-size="9.1" fill="#111" stroke="#111" stroke-width="0.25">05.2023</text><text transform="translate(1057.68,665.9) rotate(45)" font-size="9.1" fill="#111" stroke="#111" stroke-width="0.25">07.2023</text><text transform="translate(1093.53,665.9) rotate(45)" font-size="9.1" fill="#111" stroke="#111" stroke-width="0.25">09.2023</text><text transform="translate(1129.38,665.9) rotate(45)" font-size="9.1" fill="#111" stroke="#111" stroke-width="0.25">11.2023</text><text transform="translate(1165.22,665.9) rotate(45)" font-size="9.1" fill="#111" stroke="#111" stroke-width="0.25">01.2024</text><text transform="translate(1201.07,665.9) rotate(45)" font-size="9.1" fill="#111" stroke="#111" stroke-width="0.25">03.2024</text><text transform="translate(1236.92,665.9) rotate(45)" font-size="9.1" fill="#111" stroke="#111" stroke-width="0.25">05.2024</text><text transform="translate(1272.76,665.9) rotate(45)" font-size="9.1" fill="#111" stroke="#111" stroke-width="0.25">07.2024</text><text transform="translate(1308.61,665.9) rotate(45)" font-size="9.1" fill="#111" stroke="#111" stroke-width="0.25">09.2024</text><text transform="translate(1344.45,665.9) rotate(45)" font-size="9.1" fill="#111" stroke="#111" stroke-width="0.25">11.2024</text><line x1="757.5" y1="706" x2="767.5" y2="706" stroke="#dcb84a" stroke-width="1.2"/><text x="767.5" y="709.3" font-size="9" fill="#222">Dampening limit</text><line x1="834" y1="706" x2="845" y2="706" stroke="#6f6fa8" stroke-width="1" stroke-dasharray="2,2"/><text x="845.5" y="709.3" font-size="9" fill="#222">Forecast start</text><rect x="913.5" y="702.5" width="7" height="7" fill="#62a7e0" stroke="#2d3a45" stroke-width="1"/><text x="922.5" y="709.3" font-size="9" fill="#222">Actual value</text><rect x="991" y="702.5" width="7" height="7" fill="#bde07a" stroke="#3a4232" stroke-width="1"/><text x="999.5" y="709.3" font-size="9" fill="#222">Frcst val.</text></svg>
<div class="a" style="left:561px;top:730.5px;width:6px;height:2px;background:#3d8ad0;border-radius:1px"></div>
<div class="a" style="left:6px;top:744px;width:1388px;height:38px;border:1.5px solid #bec4cb;border-radius:5px;background:#fff"></div></body></html>
